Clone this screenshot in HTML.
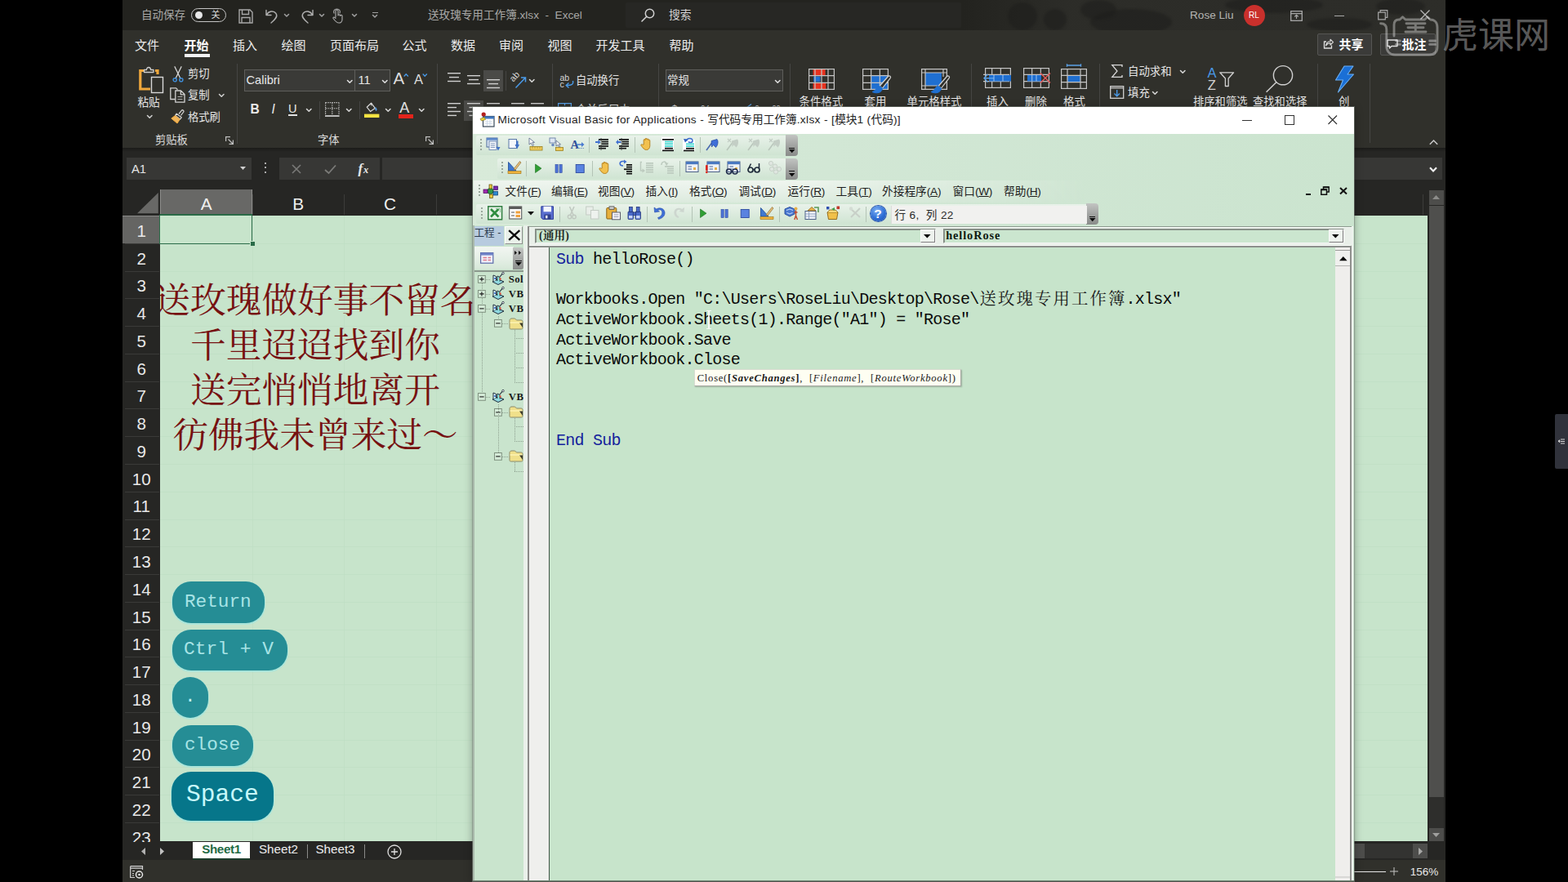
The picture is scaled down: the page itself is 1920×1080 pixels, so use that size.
<!DOCTYPE html>
<html lang="zh-CN"><head><meta charset="utf-8"><title>Excel - VBA</title><style>
html,body{margin:0;padding:0;background:#000;}
body{width:1920px;height:1080px;overflow:hidden;position:relative;font-family:"Liberation Sans","Noto Sans CJK SC",sans-serif;}
.b{position:absolute;box-sizing:border-box;}
.t{position:absolute;white-space:pre;line-height:1;}
svg.b{overflow:visible;}
</style></head><body>
<!-- frame -->
<div class="b" style="left:150.0px;top:0.0px;width:1620.0px;height:37.0px;background:#23231f;"></div>
<div class="b" style="left:150.0px;top:37.0px;width:1620.0px;height:144.0px;background:#30302b;"></div>
<div class="b" style="left:150.0px;top:181.0px;width:1620.0px;height:83.0px;background:#262624;"></div>
<div class="b" style="left:150.0px;top:181.0px;width:1620.0px;height:5.0px;background:linear-gradient(180deg,#1b1b19 0%,#262624 100%);"></div>
<div class="b" style="left:150.0px;top:264.0px;width:1620.0px;height:766.0px;background:#c7e4cb;"></div>
<div class="b" style="left:150.0px;top:1030.0px;width:1620.0px;height:22.0px;background:#262624;"></div>
<div class="b" style="left:150.0px;top:1052.7px;width:1620.0px;height:27.3px;background:#30302b;"></div>
<!-- titlebar -->
<div class="b" style="left:150.0px;top:0.0px;width:1620.0px;height:37.0px;overflow:hidden;"><div class="b" style="left:1030.0px;top:0.0px;width:590.0px;height:37.0px;background:linear-gradient(90deg,rgba(48,48,44,0) 0%,rgba(46,46,42,.85) 22%,rgba(46,46,42,.9) 100%);"></div><div class="b" style="left:1084.0px;top:3.0px;width:36.0px;height:34.0px;background:rgba(30,30,27,.55);border-radius:50%;filter:blur(1.5px);"></div><div class="b" style="left:1128.0px;top:11.0px;width:28.0px;height:26.0px;background:rgba(30,30,27,.55);border-radius:50%;filter:blur(1.5px);"></div><div class="b" style="left:1185.0px;top:11.0px;width:100.0px;height:32.0px;background:rgba(30,30,27,.55);border-radius:50%;filter:blur(1.5px);"></div><div class="b" style="left:1173.0px;top:0.0px;width:44.0px;height:24.0px;background:rgba(30,30,27,.55);border-radius:50%;filter:blur(1.5px);"></div><div class="b" style="left:1350.0px;top:-4.0px;width:120.0px;height:20.0px;background:rgba(30,30,27,.55);border-radius:50%;filter:blur(1.5px);"></div><div class="b" style="left:1450.0px;top:22.0px;width:80.0px;height:16.0px;background:rgba(30,30,27,.55);border-radius:50%;filter:blur(1.5px);"></div><div class="b" style="left:1535.0px;top:-2.0px;width:60.0px;height:20.0px;background:rgba(30,30,27,.55);border-radius:50%;filter:blur(1.5px);"></div></div>
<div class="b" style="left:766.0px;top:3.0px;width:411.0px;height:31.0px;background:#272724;border-radius:2px;"></div>
<span class="t" style="left:173.0px;top:12.0px;font-size:13.50px;color:#a8a8a6;">自动保存</span>
<div class="b" style="left:234.0px;top:9.5px;width:43.0px;height:17.5px;border:1.5px solid #c4c4c4;border-radius:9px;"></div>
<div class="b" style="left:238.5px;top:14.0px;width:9.0px;height:9.0px;background:#e8e8e8;border-radius:50%;"></div>
<span class="t" style="left:258.5px;top:13.0px;font-size:11.00px;color:#d8d8d8;">关</span>
<svg class="b" style="left:292.0px;top:11.0px;" width="18" height="18" viewBox="0 0 18 18"><path d="M1 1H14L17 4V17H1Z M4.5 1V6.5H12.5V1 M4 17V10.5H14V17" fill="none" stroke="#a8a8a8" stroke-width="1.4"/></svg>
<svg class="b" style="left:324.0px;top:10.0px;" width="18" height="18" viewBox="0 0 18 18"><path d="M2 2.5V8.5H8 M2.5 8C5 3.5 11 2.5 14 6.5C16.5 10.5 13 14 8 18" fill="none" stroke="#b0b0b0" stroke-width="1.4" stroke-linecap="round" stroke-linejoin="round"/></svg>
<svg class="b" style="left:348.0px;top:17.2px;" width="6" height="3.5" viewBox="0 0 6 3.5"><path d="M0.5 0.5 L3 3 L5.5 0.5" fill="none" stroke="#a0a0a0" stroke-width="1.5" stroke-linecap="round" stroke-linejoin="round"/></svg>
<svg class="b" style="left:367.0px;top:10.0px;" width="18" height="18" viewBox="0 0 18 18"><path d="M16 2.5V8.5H10 M15.5 8C13 3.5 7 2.5 4 6.5C1.5 10.5 5 14 10 18" fill="none" stroke="#b0b0b0" stroke-width="1.4" stroke-linecap="round" stroke-linejoin="round"/></svg>
<svg class="b" style="left:391.0px;top:17.2px;" width="6" height="3.5" viewBox="0 0 6 3.5"><path d="M0.5 0.5 L3 3 L5.5 0.5" fill="none" stroke="#a0a0a0" stroke-width="1.5" stroke-linecap="round" stroke-linejoin="round"/></svg>
<svg class="b" style="left:406.0px;top:10.0px;" width="15" height="19" viewBox="0 0 15 19"><path d="M5 11V3.5C5 1.5 8 1.5 8 3.5V9 M8 9C8 7.5 10.5 7.5 10.5 9 M10.5 9.5C10.5 8 13 8 13 9.5V14C13 16.5 11 18 9 18C6 18 4.5 16 2 12.5C1.5 11 3.5 10.5 5 12.5 M3 6C2 4 3 1 6.5 1C10 1 11 4 10 6" fill="none" stroke="#a8a8a8" stroke-width="1.2" stroke-linecap="round"/></svg>
<svg class="b" style="left:430.5px;top:17.2px;" width="6" height="3.5" viewBox="0 0 6 3.5"><path d="M0.5 0.5 L3 3 L5.5 0.5" fill="none" stroke="#a0a0a0" stroke-width="1.5" stroke-linecap="round" stroke-linejoin="round"/></svg>
<div class="b" style="left:455.5px;top:15.0px;width:7.0px;height:1.2px;background:#a0a0a0;"></div>
<svg class="b" style="left:456.0px;top:18.2px;" width="6" height="3.5" viewBox="0 0 6 3.5"><path d="M0.5 0.5 L3 3 L5.5 0.5" fill="none" stroke="#a0a0a0" stroke-width="1.5" stroke-linecap="round" stroke-linejoin="round"/></svg>
<span class="t" style="left:524.0px;top:11.8px;font-size:13.60px;color:#a8a8a6;">送玫瑰专用工作簿.xlsx  -  Excel</span>
<svg class="b" style="left:785.0px;top:10.0px;" width="17" height="17" viewBox="0 0 17 17"><circle cx="10.5" cy="6.5" r="5.2" fill="none" stroke="#d0d0d0" stroke-width="1.5"/><path d="M6.8 10.2L1 16" stroke="#d0d0d0" stroke-width="1.6" stroke-linecap="round"/></svg>
<span class="t" style="left:819.0px;top:12.2px;font-size:13.80px;color:#d4d4d4;">搜索</span>
<span class="t" style="left:1457.0px;top:11.7px;font-size:13.60px;color:#b4b4b2;">Rose Liu</span>
<div class="b" style="left:1522.5px;top:6.0px;width:26.0px;height:26.0px;background:#c9302c;border-radius:50%;"></div>
<span class="t" style="left:1535.5px;top:14.4px;font-size:10.00px;color:#fff;transform:translateX(-50%);">RL</span>
<svg class="b" style="left:1580.0px;top:12.5px;" width="15" height="13" viewBox="0 0 15 13"><rect x=".7" y=".7" width="13.6" height="11.6" fill="none" stroke="#a8a8a8" stroke-width="1.3"/><path d="M.7 3.6H14.3 M7.5 10V5.5 M5.3 7.5L7.5 5.3L9.7 7.5" fill="none" stroke="#a8a8a8" stroke-width="1.2"/></svg>
<div class="b" style="left:1634.0px;top:18.5px;width:12.0px;height:1.3px;background:#a8a8a8;"></div>
<svg class="b" style="left:1686.5px;top:12.0px;" width="12.5" height="12.5" viewBox="0 0 12.5 12.5"><path d="M.7 3.2H9.3V11.8H.7Z M3.2 3V.7H11.8V9.3H9.5" fill="none" stroke="#a8a8a8" stroke-width="1.2"/></svg>
<svg class="b" style="left:1738.5px;top:12.0px;" width="12" height="12" viewBox="0 0 12 12"><path d="M.5 .5L11.5 11.5 M11.5 .5L.5 11.5" stroke="#b8b8b8" stroke-width="1.3"/></svg>
<!-- tabs -->
<span class="t" style="left:165.0px;top:47.5px;font-size:15.00px;color:#ececec;">文件</span>
<span class="t" style="left:285.0px;top:47.5px;font-size:15.00px;color:#ececec;">插入</span>
<span class="t" style="left:344.5px;top:47.5px;font-size:15.00px;color:#ececec;">绘图</span>
<span class="t" style="left:404.0px;top:47.5px;font-size:15.00px;color:#ececec;">页面布局</span>
<span class="t" style="left:492.5px;top:47.5px;font-size:15.00px;color:#ececec;">公式</span>
<span class="t" style="left:552.0px;top:47.5px;font-size:15.00px;color:#ececec;">数据</span>
<span class="t" style="left:611.0px;top:47.5px;font-size:15.00px;color:#ececec;">审阅</span>
<span class="t" style="left:670.5px;top:47.5px;font-size:15.00px;color:#ececec;">视图</span>
<span class="t" style="left:729.5px;top:47.5px;font-size:15.00px;color:#ececec;">开发工具</span>
<span class="t" style="left:819.5px;top:47.5px;font-size:15.00px;color:#ececec;">帮助</span>
<span class="t" style="left:225.5px;top:47.5px;font-size:15.00px;color:#ffffff;font-weight:700;">开始</span>
<div class="b" style="left:226.0px;top:66.0px;width:30.5px;height:3.6px;background:#f2f2f2;"></div>
<div class="b" style="left:1612.5px;top:40.5px;width:67.5px;height:27.0px;background:#3b3b39;border:1px solid #555553;border-radius:2px;"></div>
<svg class="b" style="left:1620.0px;top:47.0px;" width="13" height="13" viewBox="0 0 13 13"><path d="M4 4H1.5V12H10.5V8.5" fill="none" stroke="#e0e0e0" stroke-width="1.3"/><path d="M3.5 9C4 5.5 6 3.8 9 3.8V1.2L12.5 4.6L9 8V5.8C6.5 5.8 5 6.6 3.5 9Z" fill="none" stroke="#e0e0e0" stroke-width="1.1" stroke-linejoin="round"/></svg>
<span class="t" style="left:1639.5px;top:47.1px;font-size:15.00px;color:#ffffff;font-weight:700;">共享</span>
<div class="b" style="left:1689.5px;top:40.5px;width:68.0px;height:27.0px;background:#3b3b39;border:1px solid #555553;border-radius:2px;"></div>
<svg class="b" style="left:1698.0px;top:47.5px;" width="14" height="12" viewBox="0 0 14 12"><path d="M1 1H13V8.5H6L3.5 11V8.5H1Z" fill="none" stroke="#e0e0e0" stroke-width="1.3" stroke-linejoin="round"/></svg>
<span class="t" style="left:1716.5px;top:47.1px;font-size:15.00px;color:#ffffff;font-weight:700;">批注</span>
<!-- ribbon -->
<svg class="b" style="left:169.0px;top:80.5px;" width="32" height="34" viewBox="0 0 32 34"><path d="M8 5.5H2.8V28H15" fill="none" stroke="#f0a83c" stroke-width="3.2"/><path d="M21 5.5H24V10" fill="none" stroke="#f0a83c" stroke-width="3.2"/><path d="M7.5 7.5V4.5H10.5C10.5 0.5 15.5 0.5 15.5 4.5H19V7.5Z" fill="none" stroke="#d0d0d0" stroke-width="1.3" stroke-linejoin="round"/><rect x="16.5" y="13.5" width="14" height="19" fill="#30302b" stroke="#d8d8d8" stroke-width="1.4"/></svg>
<span class="t" style="left:168.5px;top:119.3px;font-size:13.60px;color:#e4e4e4;">粘贴</span>
<svg class="b" style="left:179.8px;top:140.6px;" width="6.5" height="3.8" viewBox="0 0 6.5 3.8"><path d="M0.5 0.5 L3.25 3.3 L6 0.5" fill="none" stroke="#d0d0d0" stroke-width="1.5" stroke-linecap="round" stroke-linejoin="round"/></svg>
<svg class="b" style="left:211.0px;top:80.5px;" width="14" height="20" viewBox="0 0 14 20"><path d="M3 .8L9.8 14.8 M11 .8L4.2 14.8" stroke="#d8d8d8" stroke-width="1.3" stroke-linecap="round"/><circle cx="3.2" cy="16.8" r="2.1" fill="none" stroke="#3f8fdc" stroke-width="1.4"/><circle cx="10.8" cy="16.8" r="2.1" fill="none" stroke="#3f8fdc" stroke-width="1.4"/></svg>
<span class="t" style="left:230.0px;top:83.6px;font-size:13.30px;color:#e4e4e4;">剪切</span>
<svg class="b" style="left:208.0px;top:107.0px;" width="19" height="19" viewBox="0 0 19 19"><path d="M6.5 14.5H.8V.8H7.5L9.5 2.8" fill="none" stroke="#d0d0d0" stroke-width="1.3"/><path d="M6.8 4H13.5L18 8.5V18.2H6.8Z M13.3 4V8.8H18" fill="none" stroke="#d0d0d0" stroke-width="1.3" stroke-linejoin="round"/><path d="M9.5 11.5H15.5 M9.5 14.5H15.5" stroke="#b0b0b0" stroke-width="1"/></svg>
<span class="t" style="left:230.0px;top:110.2px;font-size:13.30px;color:#e4e4e4;">复制</span>
<svg class="b" style="left:267.8px;top:115.3px;" width="6.5" height="3.8" viewBox="0 0 6.5 3.8"><path d="M0.5 0.5 L3.25 3.3 L6 0.5" fill="none" stroke="#d0d0d0" stroke-width="1.5" stroke-linecap="round" stroke-linejoin="round"/></svg>
<svg class="b" style="left:208.5px;top:133.5px;" width="19" height="18" viewBox="0 0 19 18"><path d="M10 5.5L13.5 1.2C14.5 0 16.8 1.8 15.8 3L12.5 7.3" fill="none" stroke="#d8d8d8" stroke-width="1.2"/><path d="M7.2 5.2L13.2 9.8L11.6 12L5.6 7.4Z" fill="none" stroke="#d8d8d8" stroke-width="1.2" stroke-linejoin="round"/><path d="M5.4 7.6L11.2 12.2L8 17L.8 11Z" fill="#f0b45a" stroke="#f0a83c" stroke-width="1" stroke-linejoin="round"/></svg>
<span class="t" style="left:230.0px;top:136.9px;font-size:13.30px;color:#e4e4e4;">格式刷</span>
<span class="t" style="left:190.0px;top:164.6px;font-size:13.30px;color:#dcdcdc;">剪贴板</span>
<svg class="b" style="left:276.0px;top:166.5px;" width="10" height="10" viewBox="0 0 10 10"><path d="M.6 6V.6H6 M3.5 3.5L9 9 M9.4 4.5V9.4H4.5" fill="none" stroke="#c0c0c0" stroke-width="1.2"/></svg>
<div class="b" style="left:290.0px;top:78.0px;width:1.0px;height:98.0px;background:#454543;"></div>
<div class="b" style="left:298.5px;top:85.0px;width:136.5px;height:26.8px;background:#3a3a37;border:1px solid #5e5e5b;"></div>
<div class="b" style="left:435.0px;top:85.0px;width:43.0px;height:26.8px;background:#3a3a37;border:1px solid #5e5e5b;border-left:none;"></div>
<span class="t" style="left:301.5px;top:91.2px;font-size:14.60px;color:#e8e8e8;">Calibri</span>
<svg class="b" style="left:424.8px;top:97.6px;" width="6.5" height="3.8" viewBox="0 0 6.5 3.8"><path d="M0.5 0.5 L3.25 3.3 L6 0.5" fill="none" stroke="#e0e0e0" stroke-width="1.5" stroke-linecap="round" stroke-linejoin="round"/></svg>
<span class="t" style="left:438.5px;top:91.2px;font-size:14.60px;color:#e8e8e8;">11</span>
<svg class="b" style="left:467.8px;top:97.6px;" width="6.5" height="3.8" viewBox="0 0 6.5 3.8"><path d="M0.5 0.5 L3.25 3.3 L6 0.5" fill="none" stroke="#e0e0e0" stroke-width="1.5" stroke-linecap="round" stroke-linejoin="round"/></svg>
<span class="t" style="left:481.5px;top:85.8px;font-size:20.50px;color:#dcdcdc;">A</span>
<svg class="b" style="left:493.5px;top:89.5px;" width="6.5" height="4" viewBox="0 0 6.5 4"><path d="M.7 3.5L3.2 .8L5.8 3.5" fill="none" stroke="#4a9ae8" stroke-width="1.3"/></svg>
<span class="t" style="left:507.0px;top:89.2px;font-size:16.50px;color:#dcdcdc;">A</span>
<svg class="b" style="left:516.5px;top:89.5px;" width="6.5" height="4" viewBox="0 0 6.5 4"><path d="M.7 .5L3.2 3.2L5.8 .5" fill="none" stroke="#4a9ae8" stroke-width="1.3"/></svg>
<span class="t" style="left:306.5px;top:125.7px;font-size:15.60px;color:#e8e8e8;font-weight:700;">B</span>
<span class="t" style="left:332.5px;top:125.7px;font-size:15.60px;color:#e8e8e8;font-style:italic;">I</span>
<span class="t" style="left:353.0px;top:125.6px;font-size:14.60px;color:#e8e8e8;">U</span>
<div class="b" style="left:353.0px;top:140.4px;width:10.6px;height:1.2px;background:#e0e0e0;"></div>
<svg class="b" style="left:375.2px;top:133.1px;" width="6.5" height="3.8" viewBox="0 0 6.5 3.8"><path d="M0.5 0.5 L3.25 3.3 L6 0.5" fill="none" stroke="#d8d8d8" stroke-width="1.5" stroke-linecap="round" stroke-linejoin="round"/></svg>
<div class="b" style="left:390.5px;top:124.0px;width:1.0px;height:22.0px;background:#454543;"></div>
<svg class="b" style="left:398.0px;top:125.0px;" width="18" height="18" viewBox="0 0 18 18"><path d="M.6 .6H17 M.6 .6V15 M17 .6V15 M8.8 .6V15 M.6 7.8H17" stroke="#c8c8c8" stroke-width="1.1" stroke-dasharray="1.4 1.2" fill="none"/><path d="M0 17H17.6" stroke="#e0e0e0" stroke-width="1.6"/></svg>
<svg class="b" style="left:423.8px;top:133.1px;" width="6.5" height="3.8" viewBox="0 0 6.5 3.8"><path d="M0.5 0.5 L3.25 3.3 L6 0.5" fill="none" stroke="#d8d8d8" stroke-width="1.5" stroke-linecap="round" stroke-linejoin="round"/></svg>
<div class="b" style="left:439.5px;top:124.0px;width:1.0px;height:22.0px;background:#454543;"></div>
<svg class="b" style="left:446.0px;top:124.5px;" width="19" height="20" viewBox="0 0 19 20"><path d="M8.5 1.2L13.2 7.4L7.6 11.6L3.2 6.2Z" fill="none" stroke="#d8d8d8" stroke-width="1.2" stroke-linejoin="round"/><path d="M8.8 1V4.5" stroke="#d8d8d8" stroke-width="1.1"/><path d="M13.8 6.5C15.2 8 15.6 9.5 14.6 10.6C13.8 9.6 13.4 8.4 13.8 6.5Z" fill="#5aa0e6" stroke="#5aa0e6" stroke-width=".8"/><rect x="0" y="14.6" width="18.4" height="4.4" fill="#f5e342"/></svg>
<svg class="b" style="left:471.8px;top:133.1px;" width="6.5" height="3.8" viewBox="0 0 6.5 3.8"><path d="M0.5 0.5 L3.25 3.3 L6 0.5" fill="none" stroke="#d8d8d8" stroke-width="1.5" stroke-linecap="round" stroke-linejoin="round"/></svg>
<span class="t" style="left:489.3px;top:123.2px;font-size:18.00px;color:#e0e0e0;">A</span>
<div class="b" style="left:488.0px;top:140.3px;width:17.6px;height:4.6px;background:#e3241b;"></div>
<svg class="b" style="left:512.8px;top:133.1px;" width="6.5" height="3.8" viewBox="0 0 6.5 3.8"><path d="M0.5 0.5 L3.25 3.3 L6 0.5" fill="none" stroke="#d8d8d8" stroke-width="1.5" stroke-linecap="round" stroke-linejoin="round"/></svg>
<span class="t" style="left:389.0px;top:164.6px;font-size:13.30px;color:#dcdcdc;">字体</span>
<svg class="b" style="left:520.5px;top:166.5px;" width="10" height="10" viewBox="0 0 10 10"><path d="M.6 6V.6H6 M3.5 3.5L9 9 M9.4 4.5V9.4H4.5" fill="none" stroke="#c0c0c0" stroke-width="1.2"/></svg>
<div class="b" style="left:534.5px;top:78.0px;width:1.0px;height:98.0px;background:#454543;"></div>
<svg class="b" style="left:547.5px;top:89.0px;" width="16" height="14.7" viewBox="0 0 16 14.7"><rect x="0" y="0" width="16" height="1.4" fill="#d0d0d0"/><rect x="2" y="4.9" width="12" height="1.4" fill="#d0d0d0"/><rect x="0" y="9.8" width="16" height="1.4" fill="#d0d0d0"/></svg>
<svg class="b" style="left:572.0px;top:92.3px;" width="16" height="14.7" viewBox="0 0 16 14.7"><rect x="0" y="0" width="16" height="1.4" fill="#d0d0d0"/><rect x="2" y="4.9" width="12" height="1.4" fill="#d0d0d0"/><rect x="0" y="9.8" width="16" height="1.4" fill="#d0d0d0"/></svg>
<div class="b" style="left:592.0px;top:86.0px;width:23.5px;height:25.8px;background:#4a4a47;"></div>
<svg class="b" style="left:595.8px;top:97.0px;" width="16" height="14.7" viewBox="0 0 16 14.7"><rect x="0" y="0" width="16" height="1.4" fill="#d0d0d0"/><rect x="2" y="4.9" width="12" height="1.4" fill="#d0d0d0"/><rect x="0" y="9.8" width="16" height="1.4" fill="#d0d0d0"/></svg>
<div class="b" style="left:618.5px;top:87.0px;width:1.0px;height:24.0px;background:#454543;"></div>
<svg class="b" style="left:625.0px;top:87.5px;" width="20" height="21" viewBox="0 0 20 21"><path d="M6.5 19.5L18 7.5 M13 7H18.5V12.5" fill="none" stroke="#4a9ae8" stroke-width="1.5"/></svg>
<span class="t" style="left:629.5px;top:91.2px;font-size:11.00px;color:#d8d8d8;transform:rotate(-47deg);transform-origin:0 100%;">ab</span>
<svg class="b" style="left:647.8px;top:97.3px;" width="6.5" height="3.8" viewBox="0 0 6.5 3.8"><path d="M0.5 0.5 L3.25 3.3 L6 0.5" fill="none" stroke="#d8d8d8" stroke-width="1.5" stroke-linecap="round" stroke-linejoin="round"/></svg>
<div class="b" style="left:675.5px;top:78.0px;width:1.0px;height:98.0px;background:#454543;"></div>
<span class="t" style="left:685.5px;top:89.6px;font-size:10.50px;color:#d8d8d8;">ab</span>
<span class="t" style="left:685.5px;top:97.9px;font-size:10.50px;color:#d8d8d8;">c</span>
<svg class="b" style="left:691.5px;top:98.5px;" width="10.5" height="9" viewBox="0 0 10.5 9"><path d="M9.5 0C10.5 4.5 8 5.5 1.5 5.5 M4.5 2.5L1.2 5.5L4.5 8.5" fill="none" stroke="#4a9ae8" stroke-width="1.4"/></svg>
<span class="t" style="left:705.0px;top:92.3px;font-size:13.30px;color:#e4e4e4;">自动换行</span>
<svg class="b" style="left:547.5px;top:126.0px;" width="16" height="19.6" viewBox="0 0 16 19.6"><rect x="0" y="0" width="16" height="1.4" fill="#d0d0d0"/><rect x="0" y="4.9" width="11" height="1.4" fill="#d0d0d0"/><rect x="0" y="9.8" width="16" height="1.4" fill="#d0d0d0"/><rect x="0" y="14.7" width="11" height="1.4" fill="#d0d0d0"/></svg>
<div class="b" style="left:568.0px;top:122.5px;width:24.0px;height:25.0px;background:#4a4a47;"></div>
<svg class="b" style="left:572.0px;top:126.0px;" width="16" height="19.6" viewBox="0 0 16 19.6"><rect x="0" y="0" width="16" height="1.4" fill="#d0d0d0"/><rect x="2.5" y="4.9" width="11" height="1.4" fill="#d0d0d0"/><rect x="0" y="9.8" width="16" height="1.4" fill="#d0d0d0"/><rect x="2.5" y="14.7" width="11" height="1.4" fill="#d0d0d0"/></svg>
<svg class="b" style="left:595.8px;top:126.0px;" width="16" height="4.9" viewBox="0 0 16 4.9"><rect x="0" y="0" width="16" height="1.4" fill="#d0d0d0"/></svg>
<svg class="b" style="left:626.0px;top:126.0px;" width="16" height="4.9" viewBox="0 0 16 4.9"><rect x="0" y="0" width="16" height="1.4" fill="#d0d0d0"/></svg>
<svg class="b" style="left:650.0px;top:126.0px;" width="16" height="4.9" viewBox="0 0 16 4.9"><rect x="0" y="0" width="16" height="1.4" fill="#d0d0d0"/></svg>
<svg class="b" style="left:683.0px;top:125.5px;" width="17" height="6" viewBox="0 0 17 6"><path d="M.6 6V.6H16.4V6 M8.5 .6V3.2" fill="none" stroke="#5aa0e6" stroke-width="1.2"/></svg>
<span class="t" style="left:705.0px;top:127.6px;font-size:13.30px;color:#e4e4e4;">合并后居中</span>
<div class="b" style="left:805.5px;top:78.0px;width:1.0px;height:98.0px;background:#454543;"></div>
<div class="b" style="left:814.5px;top:85.0px;width:144.0px;height:26.8px;background:#3a3a37;border:1px solid #5e5e5b;"></div>
<span class="t" style="left:817.0px;top:92.3px;font-size:13.40px;color:#e4e4e4;">常规</span>
<svg class="b" style="left:948.8px;top:97.6px;" width="6.5" height="3.8" viewBox="0 0 6.5 3.8"><path d="M0.5 0.5 L3.25 3.3 L6 0.5" fill="none" stroke="#e0e0e0" stroke-width="1.5" stroke-linecap="round" stroke-linejoin="round"/></svg>
<span class="t" style="left:822.0px;top:127.3px;font-size:14.00px;color:#d0d0d0;">$</span>
<span class="t" style="left:858.0px;top:127.3px;font-size:14.00px;color:#d0d0d0;">%</span>
<span class="t" style="left:890.0px;top:120.4px;font-size:20.00px;color:#d0d0d0;font-weight:700;">,</span>
<span class="t" style="left:922.0px;top:127.7px;font-size:9.00px;color:#d0d0d0;">.0</span>
<span class="t" style="left:943.0px;top:127.7px;font-size:9.00px;color:#d0d0d0;">.00</span>
<svg class="b" style="left:913.0px;top:127.0px;" width="8" height="6" viewBox="0 0 8 6"><path d="M7 .5L1 5" stroke="#5aa0e6" stroke-width="1.2"/></svg>
<div class="b" style="left:967.0px;top:78.0px;width:1.0px;height:98.0px;background:#454543;"></div>
<svg class="b" style="left:990.0px;top:83.5px;" width="32" height="26" viewBox="0 0 32 26"><rect x="5.6" y="1" width="15" height="7.6" fill="#e8321e"/><rect x="5.6" y="17.6" width="15.8" height="7.6" fill="#e8321e"/><rect x="6.2" y="9.6" width="8.2" height="6.6" fill="#1f6fd0"/><rect x="0.6" y="0.6" width="30.8" height="24.8" fill="none" stroke="#c4c4c4" stroke-width="1.2"/><path d="M8 0V26M16 0V26M24 0V26M0 8.66667H32M0 17.3333H32" stroke="#c4c4c4" stroke-width="1.2" fill="none"/></svg>
<span class="t" style="left:978.5px;top:117.8px;font-size:13.40px;color:#e4e4e4;">条件格式</span>
<svg class="b" style="left:1056.0px;top:83.5px;" width="36" height="32" viewBox="0 0 36 32"><rect x="11" y="9" width="21" height="17" fill="#1f6fd0"/><rect x="0.6" y="0.6" width="30.8" height="24.8" fill="none" stroke="#c4c4c4" stroke-width="1.2"/><path d="M10.6667 0V26M21.3333 0V26M0 8.66667H32M0 17.3333H32" stroke="#c4c4c4" stroke-width="1.2" fill="none"/><path d="M21 21.5L31.5 9.5C33 8 35.5 9.8 34.2 11.6L24.5 24Z" fill="#30302b" stroke="#d4d4d4" stroke-width="1.2" stroke-linejoin="round"/><path d="M21 21.5C17 21.5 17.5 26.5 12 28.5C17 31 24 30 24.5 24Z" fill="#1f6fd0" stroke="#1f6fd0" stroke-width="1"/></svg>
<span class="t" style="left:1058.5px;top:117.8px;font-size:13.40px;color:#e4e4e4;">套用</span>
<svg class="b" style="left:1128.0px;top:83.5px;" width="36" height="32" viewBox="0 0 36 32"><rect x="5" y="5" width="20" height="16" fill="#1f6fd0"/><path d="M.6 .6H31.4V25.4H.6Z M5 .6V25.4 M27 .6V10 M.6 5H31.4 M.6 21H20" fill="none" stroke="#c4c4c4" stroke-width="1.2"/><path d="M21 21.5L31.5 9.5C33 8 35.5 9.8 34.2 11.6L24.5 24Z" fill="#30302b" stroke="#d4d4d4" stroke-width="1.2" stroke-linejoin="round"/><path d="M21 21.5C17 21.5 17.5 26.5 12 28.5C17 31 24 30 24.5 24Z" fill="#1f6fd0" stroke="#1f6fd0" stroke-width="1"/></svg>
<span class="t" style="left:1110.5px;top:117.8px;font-size:13.40px;color:#e4e4e4;">单元格样式</span>
<div class="b" style="left:1189.0px;top:78.0px;width:1.0px;height:98.0px;background:#454543;"></div>
<svg class="b" style="left:1204.0px;top:83.0px;transform:translateX(0px);" width="34" height="26" viewBox="0 0 34 26"><rect x="2.6" y="0.6" width="30.8" height="23.8" fill="none" stroke="#c4c4c4" stroke-width="1.2"/><path d="M10.6667 0V25M21.3333 0V25M0 8.33333H32M0 16.6667H32" stroke="#c4c4c4" stroke-width="1.2" fill="none"/><rect x="7" y="9" width="27" height="7.5" fill="#1f6fd0"/><path d="M13 12.7H1 M5.5 8L1 12.7L5.5 17.5" fill="none" stroke="#5aa0e6" stroke-width="1.4"/><path d="M13 9V16.5 M24 9V16.5" stroke="#9cc4f0" stroke-width="1"/></svg>
<span class="t" style="left:1208.0px;top:117.8px;font-size:13.40px;color:#e4e4e4;">插入</span>
<svg class="b" style="left:1252.5px;top:83.0px;" width="34" height="26" viewBox="0 0 34 26"><rect x="0.6" y="0.6" width="30.8" height="23.8" fill="none" stroke="#c4c4c4" stroke-width="1.2"/><path d="M10.6667 0V25M21.3333 0V25M0 8.33333H32M0 16.6667H32" stroke="#c4c4c4" stroke-width="1.2" fill="none"/><rect x="5" y="9" width="17" height="7.5" fill="#1f6fd0"/><path d="M10.7 9V16.5 M16 9V16.5" stroke="#9cc4f0" stroke-width="1"/><path d="M21 6.5L33 18.5 M33 6.5L21 18.5" stroke="#e25a5a" stroke-width="1.5"/></svg>
<span class="t" style="left:1255.0px;top:117.8px;font-size:13.40px;color:#e4e4e4;">删除</span>
<svg class="b" style="left:1299.0px;top:77.5px;" width="32" height="32" viewBox="0 0 32 32"><path d="M7.5 .3V3.7 M24.5 .3V3.7 M7.5 2H24.5" stroke="#5aa0e6" stroke-width="1.3" fill="none"/><g transform="translate(0 6)"><rect x="8" y="8.3" width="16" height="8.4" fill="#1f6fd0"/><rect x="0.6" y="0.6" width="30.8" height="23.8" fill="none" stroke="#c4c4c4" stroke-width="1.2"/><path d="M0 8.33333H32M0 16.6667H32" stroke="#c4c4c4" stroke-width="1.2" fill="none"/><path d="M8 0V25 M24 0V25" stroke="#c4c4c4" stroke-width="1.2"/></g></svg>
<span class="t" style="left:1302.0px;top:117.8px;font-size:13.40px;color:#e4e4e4;">格式</span>
<div class="b" style="left:1346.0px;top:78.0px;width:1.0px;height:98.0px;background:#454543;"></div>
<svg class="b" style="left:1361.0px;top:79.0px;" width="14" height="16" viewBox="0 0 14 16"><path d="M13 3V.7H.8L7 8L.8 15.3H13V13" fill="none" stroke="#d8d8d8" stroke-width="1.3" stroke-linejoin="miter"/></svg>
<span class="t" style="left:1381.0px;top:81.1px;font-size:13.40px;color:#e4e4e4;">自动求和</span>
<svg class="b" style="left:1445.2px;top:86.3px;" width="6.5" height="3.8" viewBox="0 0 6.5 3.8"><path d="M0.5 0.5 L3.25 3.3 L6 0.5" fill="none" stroke="#d8d8d8" stroke-width="1.5" stroke-linecap="round" stroke-linejoin="round"/></svg>
<svg class="b" style="left:1359.0px;top:104.5px;" width="17.5" height="16" viewBox="0 0 17.5 16"><rect x=".7" y=".7" width="16" height="14.6" fill="none" stroke="#d0d0d0" stroke-width="1.3"/><path d="M.7 2.8H16.7" stroke="#d0d0d0" stroke-width="1.2"/><path d="M8.7 5V12.5 M5.5 9.5L8.7 12.7L11.9 9.5" fill="none" stroke="#4a9ae8" stroke-width="1.4"/></svg>
<span class="t" style="left:1381.0px;top:106.8px;font-size:13.40px;color:#e4e4e4;">填充</span>
<svg class="b" style="left:1411.2px;top:111.9px;" width="6.5" height="3.8" viewBox="0 0 6.5 3.8"><path d="M0.5 0.5 L3.25 3.3 L6 0.5" fill="none" stroke="#d8d8d8" stroke-width="1.5" stroke-linecap="round" stroke-linejoin="round"/></svg>
<span class="t" style="left:1478.5px;top:80.6px;font-size:16.50px;color:#4a9ae8;">A</span>
<span class="t" style="left:1478.8px;top:96.0px;font-size:16.50px;color:#d0d0d0;">Z</span>
<svg class="b" style="left:1492.5px;top:88.0px;" width="19" height="18.5" viewBox="0 0 19 18.5"><path d="M.8 .8H17.6L11.2 8V17.5H7.4V8Z" fill="none" stroke="#d0d0d0" stroke-width="1.3" stroke-linejoin="round"/></svg>
<span class="t" style="left:1461.0px;top:117.9px;font-size:13.30px;color:#e4e4e4;">排序和筛选</span>
<svg class="b" style="left:1549.0px;top:79.0px;" width="36" height="36" viewBox="0 0 36 36"><circle cx="22" cy="13.2" r="11.6" fill="none" stroke="#d0d0d0" stroke-width="1.4"/><path d="M13.8 21.8L1.6 33.8" stroke="#d0d0d0" stroke-width="1.5"/></svg>
<span class="t" style="left:1534.0px;top:117.9px;font-size:13.30px;color:#e4e4e4;">查找和选择</span>
<div class="b" style="left:1613.0px;top:78.0px;width:1.0px;height:98.0px;background:#454543;"></div>
<svg class="b" style="left:1633.0px;top:79.5px;" width="26" height="34" viewBox="0 0 26 34"><path d="M13 1H24L17 11H24.5L5.5 33L11.5 18H2.5Z" fill="#1a6fd6" stroke="#6ab0f5" stroke-width="1.1" stroke-linejoin="round"/></svg>
<span class="t" style="left:1639.0px;top:117.8px;font-size:13.40px;color:#e4e4e4;">创</span>
<div class="b" style="left:1677.0px;top:78.0px;width:1.0px;height:97.0px;background:#454543;"></div>
<svg class="b" style="left:1749.5px;top:171.0px;" width="11" height="6.5" viewBox="0 0 11 6.5"><path d="M.8 5.8L5.5 1L10.2 5.8" fill="none" stroke="#c8c8c8" stroke-width="1.5"/></svg>
<!-- formulabar -->
<div class="b" style="left:155.0px;top:192.5px;width:152.5px;height:27.5px;background:#373735;"></div>
<span class="t" style="left:161.0px;top:200.2px;font-size:14.80px;color:#e4e4e4;">A1</span>
<svg class="b" style="left:294.0px;top:204.0px;" width="7" height="4" viewBox="0 0 7 4"><path d="M0 0H7L3.5 4Z" fill="#d0d0d0"/></svg>
<div class="b" style="left:323.5px;top:198.5px;width:2.4px;height:2.4px;background:#d8d8d8;border-radius:50%;"></div>
<div class="b" style="left:323.5px;top:204.0px;width:2.4px;height:2.4px;background:#d8d8d8;border-radius:50%;"></div>
<div class="b" style="left:323.5px;top:209.5px;width:2.4px;height:2.4px;background:#d8d8d8;border-radius:50%;"></div>
<div class="b" style="left:342.0px;top:192.5px;width:122.5px;height:27.5px;background:#373735;"></div>
<svg class="b" style="left:356.5px;top:200.5px;" width="12" height="12" viewBox="0 0 12 12"><path d="M1 1L11 11 M11 1L1 11" stroke="#7a7a78" stroke-width="1.6"/></svg>
<svg class="b" style="left:396.5px;top:200.5px;" width="15" height="12" viewBox="0 0 15 12"><path d="M1 7L5.5 11L14 1.5" fill="none" stroke="#7a7a78" stroke-width="1.8"/></svg>
<span class="t" style="left:438.5px;top:197.8px;font-size:17.00px;color:#e8e8e8;font-family:'Liberation Serif',serif;font-weight:700;font-style:italic;">f</span>
<span class="t" style="left:445.0px;top:202.0px;font-size:12.50px;color:#e8e8e8;font-family:'Liberation Serif',serif;font-weight:700;font-style:italic;">x</span>
<div class="b" style="left:468.0px;top:192.5px;width:1297.5px;height:27.5px;background:#373735;"></div>
<svg class="b" style="left:1750.0px;top:203.5px;" width="10" height="7" viewBox="0 0 10 7"><path d="M1 1.2L5 5.4L9 1.2" fill="none" stroke="#f0f0f0" stroke-width="2.2"/></svg>
<!-- grid -->
<div class="b" style="left:150.0px;top:232.0px;width:1620.0px;height:32.0px;background:#262624;"></div>
<svg class="b" style="left:167.8px;top:235.8px;" width="25.8" height="25.2" viewBox="0 0 25.8 25.2"><path d="M25.8 0V25.2H0Z" fill="#686866"/></svg>
<div class="b" style="left:195.5px;top:231.6px;width:113.4px;height:31.9px;background:#686866;border-left:1px solid #8c8c8a;border-right:1px solid #8c8c8a;"></div>
<div class="b" style="left:196.0px;top:262.4px;width:112.5px;height:1.6px;background:#2a6a45;"></div>
<span class="t" style="left:252.6px;top:239.6px;font-size:20.80px;color:#f0f0f0;transform:translateX(-50%);">A</span>
<span class="t" style="left:365.1px;top:239.6px;font-size:20.80px;color:#f0f0f0;transform:translateX(-50%);">B</span>
<span class="t" style="left:477.6px;top:239.6px;font-size:20.80px;color:#f0f0f0;transform:translateX(-50%);">C</span>
<div class="b" style="left:308.5px;top:238.0px;width:1.0px;height:25.0px;background:#3c3c3a;"></div>
<div class="b" style="left:421.0px;top:238.0px;width:1.0px;height:25.0px;background:#3c3c3a;"></div>
<div class="b" style="left:533.5px;top:238.0px;width:1.0px;height:25.0px;background:#3c3c3a;"></div>
<div class="b" style="left:646.0px;top:238.0px;width:1.0px;height:25.0px;background:#3c3c3a;"></div>
<div class="b" style="left:758.5px;top:238.0px;width:1.0px;height:25.0px;background:#3c3c3a;"></div>
<div class="b" style="left:871.0px;top:238.0px;width:1.0px;height:25.0px;background:#3c3c3a;"></div>
<div class="b" style="left:983.5px;top:238.0px;width:1.0px;height:25.0px;background:#3c3c3a;"></div>
<div class="b" style="left:1096.0px;top:238.0px;width:1.0px;height:25.0px;background:#3c3c3a;"></div>
<div class="b" style="left:1208.5px;top:238.0px;width:1.0px;height:25.0px;background:#3c3c3a;"></div>
<div class="b" style="left:1321.0px;top:238.0px;width:1.0px;height:25.0px;background:#3c3c3a;"></div>
<div class="b" style="left:1433.5px;top:238.0px;width:1.0px;height:25.0px;background:#3c3c3a;"></div>
<div class="b" style="left:1546.0px;top:238.0px;width:1.0px;height:25.0px;background:#3c3c3a;"></div>
<div class="b" style="left:1741.5px;top:238.0px;width:1.0px;height:25.0px;background:#3c3c3a;"></div>
<div class="b" style="left:150.0px;top:264.0px;width:45.5px;height:766.0px;background:#262624;"></div>
<div class="b" style="left:150.0px;top:264.4px;width:45.5px;height:33.6px;background:#656563;border-top:1px solid #8a8a88;"></div>
<span class="t" style="left:173.3px;top:272.7px;font-size:20.60px;color:#e8e8e8;transform:translateX(-50%);">1</span>
<span class="t" style="left:173.3px;top:306.5px;font-size:20.60px;color:#e8e8e8;transform:translateX(-50%);">2</span>
<div class="b" style="left:153.0px;top:297.8px;width:42.0px;height:1.0px;background:#3a3a38;"></div>
<span class="t" style="left:173.3px;top:340.2px;font-size:20.60px;color:#e8e8e8;transform:translateX(-50%);">3</span>
<div class="b" style="left:153.0px;top:331.5px;width:42.0px;height:1.0px;background:#3a3a38;"></div>
<span class="t" style="left:173.3px;top:374.0px;font-size:20.60px;color:#e8e8e8;transform:translateX(-50%);">4</span>
<div class="b" style="left:153.0px;top:365.3px;width:42.0px;height:1.0px;background:#3a3a38;"></div>
<span class="t" style="left:173.3px;top:407.8px;font-size:20.60px;color:#e8e8e8;transform:translateX(-50%);">5</span>
<div class="b" style="left:153.0px;top:399.1px;width:42.0px;height:1.0px;background:#3a3a38;"></div>
<span class="t" style="left:173.3px;top:441.5px;font-size:20.60px;color:#e8e8e8;transform:translateX(-50%);">6</span>
<div class="b" style="left:153.0px;top:432.9px;width:42.0px;height:1.0px;background:#3a3a38;"></div>
<span class="t" style="left:173.3px;top:475.3px;font-size:20.60px;color:#e8e8e8;transform:translateX(-50%);">7</span>
<div class="b" style="left:153.0px;top:466.6px;width:42.0px;height:1.0px;background:#3a3a38;"></div>
<span class="t" style="left:173.3px;top:509.1px;font-size:20.60px;color:#e8e8e8;transform:translateX(-50%);">8</span>
<div class="b" style="left:153.0px;top:500.4px;width:42.0px;height:1.0px;background:#3a3a38;"></div>
<span class="t" style="left:173.3px;top:542.8px;font-size:20.60px;color:#e8e8e8;transform:translateX(-50%);">9</span>
<div class="b" style="left:153.0px;top:534.2px;width:42.0px;height:1.0px;background:#3a3a38;"></div>
<span class="t" style="left:173.3px;top:576.6px;font-size:20.60px;color:#e8e8e8;transform:translateX(-50%);">10</span>
<div class="b" style="left:153.0px;top:567.9px;width:42.0px;height:1.0px;background:#3a3a38;"></div>
<span class="t" style="left:173.3px;top:610.4px;font-size:20.60px;color:#e8e8e8;transform:translateX(-50%);">11</span>
<div class="b" style="left:153.0px;top:601.7px;width:42.0px;height:1.0px;background:#3a3a38;"></div>
<span class="t" style="left:173.3px;top:644.2px;font-size:20.60px;color:#e8e8e8;transform:translateX(-50%);">12</span>
<div class="b" style="left:153.0px;top:635.5px;width:42.0px;height:1.0px;background:#3a3a38;"></div>
<span class="t" style="left:173.3px;top:677.9px;font-size:20.60px;color:#e8e8e8;transform:translateX(-50%);">13</span>
<div class="b" style="left:153.0px;top:669.2px;width:42.0px;height:1.0px;background:#3a3a38;"></div>
<span class="t" style="left:173.3px;top:711.7px;font-size:20.60px;color:#e8e8e8;transform:translateX(-50%);">14</span>
<div class="b" style="left:153.0px;top:703.0px;width:42.0px;height:1.0px;background:#3a3a38;"></div>
<span class="t" style="left:173.3px;top:745.5px;font-size:20.60px;color:#e8e8e8;transform:translateX(-50%);">15</span>
<div class="b" style="left:153.0px;top:736.8px;width:42.0px;height:1.0px;background:#3a3a38;"></div>
<span class="t" style="left:173.3px;top:779.2px;font-size:20.60px;color:#e8e8e8;transform:translateX(-50%);">16</span>
<div class="b" style="left:153.0px;top:770.6px;width:42.0px;height:1.0px;background:#3a3a38;"></div>
<span class="t" style="left:173.3px;top:813.0px;font-size:20.60px;color:#e8e8e8;transform:translateX(-50%);">17</span>
<div class="b" style="left:153.0px;top:804.3px;width:42.0px;height:1.0px;background:#3a3a38;"></div>
<span class="t" style="left:173.3px;top:846.8px;font-size:20.60px;color:#e8e8e8;transform:translateX(-50%);">18</span>
<div class="b" style="left:153.0px;top:838.1px;width:42.0px;height:1.0px;background:#3a3a38;"></div>
<span class="t" style="left:173.3px;top:880.5px;font-size:20.60px;color:#e8e8e8;transform:translateX(-50%);">19</span>
<div class="b" style="left:153.0px;top:871.9px;width:42.0px;height:1.0px;background:#3a3a38;"></div>
<span class="t" style="left:173.3px;top:914.3px;font-size:20.60px;color:#e8e8e8;transform:translateX(-50%);">20</span>
<div class="b" style="left:153.0px;top:905.6px;width:42.0px;height:1.0px;background:#3a3a38;"></div>
<span class="t" style="left:173.3px;top:948.1px;font-size:20.60px;color:#e8e8e8;transform:translateX(-50%);">21</span>
<div class="b" style="left:153.0px;top:939.4px;width:42.0px;height:1.0px;background:#3a3a38;"></div>
<span class="t" style="left:173.3px;top:981.9px;font-size:20.60px;color:#e8e8e8;transform:translateX(-50%);">22</span>
<div class="b" style="left:153.0px;top:973.2px;width:42.0px;height:1.0px;background:#3a3a38;"></div>
<span class="t" style="left:173.3px;top:1015.6px;font-size:20.60px;color:#e8e8e8;transform:translateX(-50%);">23</span>
<div class="b" style="left:153.0px;top:1006.9px;width:42.0px;height:1.0px;background:#3a3a38;"></div>
<div class="b" style="left:308.5px;top:264.0px;width:1.0px;height:766.0px;background:#bcdcc2;opacity:.55;"></div>
<div class="b" style="left:421.0px;top:264.0px;width:1.0px;height:766.0px;background:#bcdcc2;opacity:.55;"></div>
<div class="b" style="left:533.5px;top:264.0px;width:1.0px;height:766.0px;background:#bcdcc2;opacity:.55;"></div>
<div class="b" style="left:646.0px;top:264.0px;width:1.0px;height:766.0px;background:#bcdcc2;opacity:.55;"></div>
<div class="b" style="left:758.5px;top:264.0px;width:1.0px;height:766.0px;background:#bcdcc2;opacity:.55;"></div>
<div class="b" style="left:871.0px;top:264.0px;width:1.0px;height:766.0px;background:#bcdcc2;opacity:.55;"></div>
<div class="b" style="left:983.5px;top:264.0px;width:1.0px;height:766.0px;background:#bcdcc2;opacity:.55;"></div>
<div class="b" style="left:1096.0px;top:264.0px;width:1.0px;height:766.0px;background:#bcdcc2;opacity:.55;"></div>
<div class="b" style="left:1208.5px;top:264.0px;width:1.0px;height:766.0px;background:#bcdcc2;opacity:.55;"></div>
<div class="b" style="left:1321.0px;top:264.0px;width:1.0px;height:766.0px;background:#bcdcc2;opacity:.55;"></div>
<div class="b" style="left:1433.5px;top:264.0px;width:1.0px;height:766.0px;background:#bcdcc2;opacity:.55;"></div>
<div class="b" style="left:1546.0px;top:264.0px;width:1.0px;height:766.0px;background:#bcdcc2;opacity:.55;"></div>
<div class="b" style="left:1658.5px;top:264.0px;width:1.0px;height:766.0px;background:#bcdcc2;opacity:.55;"></div>
<div class="b" style="left:196.0px;top:297.8px;width:1552.0px;height:1.0px;background:#bcdcc2;opacity:.55;"></div>
<div class="b" style="left:196.0px;top:331.5px;width:1552.0px;height:1.0px;background:#bcdcc2;opacity:.55;"></div>
<div class="b" style="left:196.0px;top:365.3px;width:1552.0px;height:1.0px;background:#bcdcc2;opacity:.55;"></div>
<div class="b" style="left:196.0px;top:399.1px;width:1552.0px;height:1.0px;background:#bcdcc2;opacity:.55;"></div>
<div class="b" style="left:196.0px;top:432.9px;width:1552.0px;height:1.0px;background:#bcdcc2;opacity:.55;"></div>
<div class="b" style="left:196.0px;top:466.6px;width:1552.0px;height:1.0px;background:#bcdcc2;opacity:.55;"></div>
<div class="b" style="left:196.0px;top:500.4px;width:1552.0px;height:1.0px;background:#bcdcc2;opacity:.55;"></div>
<div class="b" style="left:196.0px;top:534.2px;width:1552.0px;height:1.0px;background:#bcdcc2;opacity:.55;"></div>
<div class="b" style="left:196.0px;top:567.9px;width:1552.0px;height:1.0px;background:#bcdcc2;opacity:.55;"></div>
<div class="b" style="left:196.0px;top:601.7px;width:1552.0px;height:1.0px;background:#bcdcc2;opacity:.55;"></div>
<div class="b" style="left:196.0px;top:635.5px;width:1552.0px;height:1.0px;background:#bcdcc2;opacity:.55;"></div>
<div class="b" style="left:196.0px;top:669.2px;width:1552.0px;height:1.0px;background:#bcdcc2;opacity:.55;"></div>
<div class="b" style="left:196.0px;top:703.0px;width:1552.0px;height:1.0px;background:#bcdcc2;opacity:.55;"></div>
<div class="b" style="left:196.0px;top:736.8px;width:1552.0px;height:1.0px;background:#bcdcc2;opacity:.55;"></div>
<div class="b" style="left:196.0px;top:770.6px;width:1552.0px;height:1.0px;background:#bcdcc2;opacity:.55;"></div>
<div class="b" style="left:196.0px;top:804.3px;width:1552.0px;height:1.0px;background:#bcdcc2;opacity:.55;"></div>
<div class="b" style="left:196.0px;top:838.1px;width:1552.0px;height:1.0px;background:#bcdcc2;opacity:.55;"></div>
<div class="b" style="left:196.0px;top:871.9px;width:1552.0px;height:1.0px;background:#bcdcc2;opacity:.55;"></div>
<div class="b" style="left:196.0px;top:905.6px;width:1552.0px;height:1.0px;background:#bcdcc2;opacity:.55;"></div>
<div class="b" style="left:196.0px;top:939.4px;width:1552.0px;height:1.0px;background:#bcdcc2;opacity:.55;"></div>
<div class="b" style="left:196.0px;top:973.2px;width:1552.0px;height:1.0px;background:#bcdcc2;opacity:.55;"></div>
<div class="b" style="left:196.0px;top:1006.9px;width:1552.0px;height:1.0px;background:#bcdcc2;opacity:.55;"></div>
<div class="b" style="left:195.2px;top:263.0px;width:114.0px;height:35.8px;border:1.6px solid #2a6b48;"></div>
<div class="b" style="left:305.5px;top:295.3px;width:5.2px;height:5.2px;background:#2a6b48;border:1px solid #c7e4cb;box-sizing:content-box;"></div>
<!-- poem -->
<div class="b" style="left:195.5px;top:300.0px;width:400.0px;height:280.0px;overflow:hidden;"><span class="t" style="left:-6.2px;top:46.6px;font-size:43.70px;color:#761111;font-family:'Liberation Serif','Noto Serif CJK SC',serif;">送玫瑰做好事不留名</span><span class="t" style="left:37.5px;top:102.2px;font-size:43.70px;color:#761111;font-family:'Liberation Serif','Noto Serif CJK SC',serif;">千里迢迢找到你</span><span class="t" style="left:37.5px;top:156.8px;font-size:43.70px;color:#761111;font-family:'Liberation Serif','Noto Serif CJK SC',serif;">送完悄悄地离开</span><span class="t" style="left:15.7px;top:211.8px;font-size:43.70px;color:#761111;font-family:'Liberation Serif','Noto Serif CJK SC',serif;">彷佛我未曾来过～</span></div>
<!-- keys -->
<div class="b" style="left:210.5px;top:712.0px;width:113.0px;height:50.5px;background:#258d95;border-radius:23px;box-shadow:0 1px 0 1px rgba(150,232,232,.55);"></div>
<span class="t" style="left:226.0px;top:725.5px;font-size:22.70px;color:#a8e4e6;font-family:'Liberation Mono',monospace;">Return</span>
<div class="b" style="left:210.5px;top:770.5px;width:141.5px;height:50.0px;background:#258d95;border-radius:23px;box-shadow:0 1px 0 1px rgba(150,232,232,.55);"></div>
<span class="t" style="left:225.0px;top:783.7px;font-size:22.90px;color:#a8e4e6;font-family:'Liberation Mono',monospace;">Ctrl + V</span>
<div class="b" style="left:210.5px;top:829.0px;width:44.0px;height:50.0px;background:#258d95;border-radius:23px;box-shadow:0 1px 0 1px rgba(150,232,232,.55);"></div>
<span class="t" style="left:226.0px;top:842.3px;font-size:22.70px;color:#c0f0f0;font-family:'Liberation Mono',monospace;">.</span>
<div class="b" style="left:210.5px;top:887.5px;width:99.5px;height:50.0px;background:#258d95;border-radius:23px;box-shadow:0 1px 0 1px rgba(150,232,232,.55);"></div>
<span class="t" style="left:226.0px;top:900.8px;font-size:22.70px;color:#a8e4e6;font-family:'Liberation Mono',monospace;">close</span>
<div class="b" style="left:210.3px;top:945.3px;width:124.7px;height:59.7px;background:#06768a;border-radius:24px;box-shadow:0 1px 0 1px rgba(150,232,232,.55);"></div>
<span class="t" style="left:228.0px;top:959.3px;font-size:29.60px;color:#c8f8fb;font-family:'Liberation Mono',monospace;">Space</span>
<!-- sheettabs -->
<div class="b" style="left:150.0px;top:1030.5px;width:428.5px;height:22.0px;background:#262624;"></div>
<svg class="b" style="left:172.5px;top:1038.0px;" width="5" height="9" viewBox="0 0 5 9"><path d="M5 0V9L0 4.5Z" fill="#b0b0b0"/></svg>
<svg class="b" style="left:196.0px;top:1038.0px;" width="5" height="9" viewBox="0 0 5 9"><path d="M0 0V9L5 4.5Z" fill="#c0c0c0"/></svg>
<div class="b" style="left:236.0px;top:1030.5px;width:70.0px;height:20.3px;background:#ffffff;"></div>
<div class="b" style="left:236.0px;top:1050.8px;width:70.0px;height:2.0px;background:#1c3b2b;"></div>
<span class="t" style="left:271.0px;top:1032.2px;font-size:15.20px;color:#1f6b45;font-weight:700;letter-spacing:-0.35px;transform:translateX(-50%);">Sheet1</span>
<span class="t" style="left:341.0px;top:1032.2px;font-size:15.20px;color:#ececec;transform:translateX(-50%);">Sheet2</span>
<span class="t" style="left:410.5px;top:1032.2px;font-size:15.20px;color:#ececec;transform:translateX(-50%);">Sheet3</span>
<div class="b" style="left:376.0px;top:1034.0px;width:1.0px;height:17.0px;background:#8a8a88;"></div>
<div class="b" style="left:445.5px;top:1034.0px;width:1.0px;height:17.0px;background:#8a8a88;"></div>
<svg class="b" style="left:473.5px;top:1033.5px;" width="18" height="18" viewBox="0 0 18 18"><circle cx="9" cy="9" r="8" fill="none" stroke="#e0e0e0" stroke-width="1.3"/><path d="M9 5V13 M5 9H13" stroke="#e0e0e0" stroke-width="1.3"/></svg>
<!-- statusbar -->
<svg class="b" style="left:159.0px;top:1059.5px;" width="17" height="16" viewBox="0 0 17 16"><path d="M.7 .7H15.5V5 M.7 .7V14.5H6 M.7 3.2H15.5 M3 6.5H6 M3 9.5H5 M3 12H5" fill="none" stroke="#d0d0d0" stroke-width="1.2"/><circle cx="11.5" cy="11" r="4" fill="none" stroke="#e8e8e8" stroke-width="1.5"/><circle cx="11.5" cy="11" r="1.3" fill="#e8e8e8"/></svg>
<div class="b" style="left:1658.0px;top:1066.5px;width:38.5px;height:1.5px;background:#e6e6e6;"></div>
<svg class="b" style="left:1702.0px;top:1062.0px;" width="10" height="10" viewBox="0 0 10 10"><path d="M5 0V10 M0 5H10" stroke="#c4c4c4" stroke-width="1"/></svg>
<span class="t" style="left:1726.7px;top:1060.6px;font-size:13.50px;color:#e8e8e8;">156%</span>
<!-- scrollbars -->
<div class="b" style="left:1747.5px;top:232.0px;width:22.5px;height:798.5px;background:#262624;"></div>
<div class="b" style="left:1749.5px;top:233.0px;width:18.0px;height:17.5px;background:#4d4d4b;"></div>
<svg class="b" style="left:1754.0px;top:238.5px;" width="9" height="5" viewBox="0 0 9 5"><path d="M0 5H9L4.5 0Z" fill="#8c8c8a"/></svg>
<div class="b" style="left:1749.5px;top:251.5px;width:18.0px;height:724.5px;background:#4f4f4d;"></div>
<div class="b" style="left:1749.5px;top:976.0px;width:18.0px;height:37.5px;background:#2e2e2c;"></div>
<div class="b" style="left:1749.5px;top:1013.5px;width:18.0px;height:16.5px;background:#4d4d4b;"></div>
<svg class="b" style="left:1754.0px;top:1019.5px;" width="9" height="5" viewBox="0 0 9 5"><path d="M0 0H9L4.5 5Z" fill="#a0a09e"/></svg>
<div class="b" style="left:1658.0px;top:1030.5px;width:112.0px;height:22.0px;background:#262624;"></div>
<div class="b" style="left:1658.0px;top:1033.0px;width:13.0px;height:17.5px;background:#4d4d4b;"></div>
<div class="b" style="left:1671.0px;top:1033.0px;width:59.0px;height:17.5px;background:#333331;"></div>
<div class="b" style="left:1730.0px;top:1033.0px;width:17.5px;height:17.5px;background:#4d4d4b;"></div>
<svg class="b" style="left:1737.0px;top:1037.5px;" width="5" height="9" viewBox="0 0 5 9"><path d="M0 0V9L5 4.5Z" fill="#a8a8a6"/></svg>
<!-- vba_frame -->
<div class="b" style="left:578.5px;top:130.5px;width:1079.0px;height:948.5px;background:#cfe6d3;box-shadow:0 0 0 1px rgba(120,130,120,.55),0 2px 10px rgba(0,0,0,.35);"></div>
<div class="b" style="left:578.5px;top:130.5px;width:1079.0px;height:33.0px;background:#ffffff;"></div>
<div class="b" style="left:578.5px;top:163.5px;width:1079.0px;height:113.0px;background:linear-gradient(90deg,#d8ead9 0%,#d2e7d5 40%,#cbe4cf 100%);"></div>
<svg class="b" style="left:587.0px;top:137.0px;" width="19" height="19" viewBox="0 0 19 19"><rect x="4.5" y="5.5" width="13.5" height="12.5" fill="#fdfdfd" stroke="#3a4a5a" stroke-width="1.2"/><rect x="4.5" y="5.5" width="13.5" height="3" fill="#3f78c0"/><path d="M7 12H16 M7 14.5H16 M9.5 10V17 M13 10V17" stroke="#c9d6e6" stroke-width=".8"/><circle cx="5.2" cy="3" r="2.6" fill="#b4201c"/><path d="M1 8.5L6 6.5L7.5 9.5L2.5 11Z" fill="#e8d43c" stroke="#7a6a10" stroke-width=".6"/></svg>
<span class="t" style="left:609.5px;top:140.0px;font-size:13.70px;color:#222;letter-spacing:0.34px;">Microsoft Visual Basic for Applications - <span style="letter-spacing:0">写代码专用工作簿</span>.xlsx - [<span style="letter-spacing:0">模块</span>1 (<span style="letter-spacing:0">代码</span>)]</span>
<div class="b" style="left:1521.0px;top:146.5px;width:11.5px;height:1.2px;background:#333;"></div>
<div class="b" style="left:1573.0px;top:141.0px;width:11.5px;height:11.5px;border:1.2px solid #333;"></div>
<svg class="b" style="left:1626.0px;top:141.0px;" width="11.5" height="11.5" viewBox="0 0 11.5 11.5"><path d="M.5 .5L11 11 M11 .5L.5 11" stroke="#333" stroke-width="1.2"/></svg>
<!-- vba_toolbars -->
<div class="b" style="left:583.0px;top:165.5px;width:381.0px;height:24.5px;background:linear-gradient(180deg,#e9f2ea 0%,#dcebde 50%,#cfe4d2 100%);border-radius:2px;"></div>
<svg class="b" style="left:588.0px;top:170.0px;" width="2" height="16" viewBox="0 0 2 16"><rect x="0" y="0" width="2" height="2" fill="#9aa89c"/><rect x="0" y="4" width="2" height="2" fill="#9aa89c"/><rect x="0" y="8" width="2" height="2" fill="#9aa89c"/><rect x="0" y="12" width="2" height="2" fill="#9aa89c"/></svg>
<div class="b" style="left:962.0px;top:164.5px;width:14.5px;height:26.5px;background:linear-gradient(180deg,#c2c4c2 0%,#9fa19f 55%,#8a8c8a 100%);border-radius:0 4px 4px 0;"></div><div class="b" style="left:965.5px;top:180.5px;width:7.5px;height:1.3px;background:#111;"></div><svg class="b" style="left:965.5px;top:183.0px;" width="7.5" height="4.2" viewBox="0 0 7.5 4.2"><path d="M0 0H7.5L3.75 4.2Z" fill="#0a0a0a"/></svg>
<svg class="b" style="left:595.0px;top:168.0px;" width="18" height="18" viewBox="0 0 18 18"><rect x="1" y="1" width="13" height="11" fill="#dfe8f4" stroke="#4a6a9c" stroke-width="1"/><rect x="1" y="1" width="13" height="2.6" fill="#5a86c8"/><rect x="4" y="5" width="9" height="10.5" fill="#f4f7fb" stroke="#6a86b0" stroke-width=".9"/><path d="M5.8 8H11 M5.8 10.3H11 M5.8 12.6H11" stroke="#7f96bb" stroke-width="1"/><path d="M12.5 12H17.5L15 16.5Z" fill="#3f6fc4"/></svg>
<svg class="b" style="left:622.0px;top:168.0px;" width="18" height="18" viewBox="0 0 18 18"><rect x="1" y="2.5" width="9.5" height="11" fill="#f4f7fb" stroke="#5a78a8" stroke-width="1"/><path d="M8.5 9H14L11.2 14.5Z M10 4.5H12.5V9.5H10Z" fill="#3f6fc4"/></svg>
<svg class="b" style="left:646.0px;top:168.0px;" width="18" height="18" viewBox="0 0 18 18"><path d="M2 1L2 9L4.2 7L6 10.5L7.5 9.8L5.8 6.4H8.5Z" fill="#f8f8f8" stroke="#5a6a8a" stroke-width=".8"/><rect x="3" y="11.5" width="15" height="4.5" fill="#f0cc5a" stroke="#9a7f1e" stroke-width=".8"/><path d="M6 11.5V14 M9 11.5V14 M12 11.5V14 M15 11.5V14" stroke="#9a7f1e" stroke-width=".6"/></svg>
<svg class="b" style="left:672.0px;top:168.0px;" width="18" height="18" viewBox="0 0 18 18"><rect x="1" y="1" width="7" height="6" fill="#dfe8f4" stroke="#6a7fa6" stroke-width=".9"/><path d="M9 4L9 11L11 9.3L12.5 12.3L13.8 11.7L12.3 8.8H14.6Z" fill="#f8f8f8" stroke="#5a6a8a" stroke-width=".8"/><rect x="8.5" y="12.5" width="9" height="4" fill="#f0cc5a" stroke="#9a7f1e" stroke-width=".8"/><circle cx="5" cy="9.5" r="1.8" fill="#6a8ac0"/></svg>
<span class="t" style="left:698.5px;top:170.4px;font-size:14.50px;color:#2f4f9a;font-family:'Liberation Serif',serif;font-weight:700;">A</span>
<svg class="b" style="left:706.0px;top:168.0px;" width="18" height="18" viewBox="0 0 18 18"><path d="M1 8.2H6V6L9.5 9L6 12V9.8H1Z" fill="#4a7ad0"/><path d="M1 13.5H9" stroke="#6a8ac0" stroke-width="1" stroke-dasharray="1.3 1"/></svg>
<div class="b" style="left:721.0px;top:168.0px;width:1.0px;height:19.0px;background:#b4c4b6;"></div>
<svg class="b" style="left:727.5px;top:168.0px;" width="18" height="18" viewBox="0 0 18 18"><path d="M1 5H4.5V3L7.5 6L4.5 9V7H1Z" fill="#3f6fd0"/><rect x="5" y="2" width="12" height="1.7" fill="#111"/><rect x="8.5" y="4.7" width="8.5" height="1.7" fill="#111"/><rect x="8.5" y="7.4" width="8.5" height="1.7" fill="#111"/><rect x="5" y="10.1" width="12" height="1.7" fill="#111"/><rect x="5" y="12.8" width="9" height="1.7" fill="#111"/><path d="M8 1V17" stroke="#333" stroke-width=".8" stroke-dasharray="1.5 1.2"/></svg>
<svg class="b" style="left:753.0px;top:168.0px;" width="18" height="18" viewBox="0 0 18 18"><path d="M7.5 5H4V3L1 6L4 9V7H7.5Z" fill="#3f6fd0"/><rect x="5" y="2" width="12" height="1.7" fill="#111"/><rect x="8.5" y="4.7" width="8.5" height="1.7" fill="#111"/><rect x="8.5" y="7.4" width="8.5" height="1.7" fill="#111"/><rect x="5" y="10.1" width="12" height="1.7" fill="#111"/><rect x="5" y="12.8" width="9" height="1.7" fill="#111"/><path d="M8 1V17" stroke="#333" stroke-width=".8" stroke-dasharray="1.5 1.2"/></svg>
<div class="b" style="left:776.5px;top:168.0px;width:1.0px;height:19.0px;background:#b4c4b6;"></div>
<svg class="b" style="left:783.5px;top:168.0px;" width="18" height="18" viewBox="0 0 18 18"><path d="M4.2 9V3.6C4.2 2.2 6 2.2 6 3.6V2.4C6 1 8 1 8 2.4V2.8C8 1.6 10 1.6 10 2.8V3.8C10 2.8 11.8 2.8 11.8 4V10.5C11.8 13.5 10 15.5 7.5 15.5C5 15.5 3.5 13.5 1 10.2C.4 9 1.8 8 3 9.4Z" fill="#f2c14e" stroke="#b07a18" stroke-width=".9" stroke-linejoin="round"/></svg>
<svg class="b" style="left:809.5px;top:168.0px;" width="18" height="18" viewBox="0 0 18 18"><rect x="0" y="0" width="15" height="16.5" fill="#fff"/><rect x="1" y="2" width="14" height="1.7" fill="#111"/><rect x="4" y="4.7" width="10" height="1.7" fill="#3fd8d0"/><rect x="4" y="7.4" width="10" height="1.7" fill="#3fd8d0"/><rect x="4" y="10.1" width="10" height="1.7" fill="#3fd8d0"/><rect x="4" y="12.8" width="10" height="1.7" fill="#111"/><rect x="1" y="15.5" width="14" height="1.7" fill="#111"/></svg>
<svg class="b" style="left:835.5px;top:168.0px;" width="18" height="18" viewBox="0 0 18 18"><rect x="0" y="3" width="15" height="13.5" fill="#fff"/><path d="M5 4.5C5 .5 12 .5 12 4.5C12 7 8 7 7 5.5" fill="none" stroke="#3f6fd0" stroke-width="1.6"/><path d="M1 2L6.5 2.5L3 6.5Z" fill="#2f5fc0"/><g transform="translate(0 5.5)"><rect x="4" y="2" width="10" height="1.7" fill="#3fd8d0"/><rect x="4" y="4.7" width="10" height="1.7" fill="#3fd8d0"/><rect x="4" y="7.4" width="10" height="1.7" fill="#111"/><rect x="1" y="10.1" width="13" height="1.7" fill="#111"/></g></svg>
<div class="b" style="left:857.0px;top:168.0px;width:1.0px;height:19.0px;background:#b4c4b6;"></div>
<svg class="b" style="left:864.0px;top:168.0px;" width="18" height="18" viewBox="0 0 18 18"><path d="M1 16L9 5" stroke="#4a6ab0" stroke-width="1.6"/><path d="M7 4.5L14 2.5C16 5 15 10 12.5 12.5L9.5 9.5L7.5 12Z" fill="#3f6fd8" stroke="#24479a" stroke-width=".7"/></svg>
<svg class="b" style="left:889.0px;top:168.0px;" width="18" height="18" viewBox="0 0 18 18"><path d="M1 16L9 5" stroke="#b9c6bb" stroke-width="1.6"/><path d="M7 4.5L14 2.5C16 5 15 10 12.5 12.5L9.5 9.5L7.5 12Z" fill="#c3cec5"/><path d="M2 2L6 6 M6 2L2 6" stroke="#c3cec5" stroke-width="1.3"/></svg>
<svg class="b" style="left:914.5px;top:168.0px;" width="18" height="18" viewBox="0 0 18 18"><path d="M1 16L9 5" stroke="#b9c6bb" stroke-width="1.6"/><path d="M7 4.5L14 2.5C16 5 15 10 12.5 12.5L9.5 9.5L7.5 12Z" fill="#c3cec5"/><path d="M2 2L6 6 M6 2L2 6" stroke="#c3cec5" stroke-width="1.3"/></svg>
<svg class="b" style="left:940.0px;top:168.0px;" width="18" height="18" viewBox="0 0 18 18"><path d="M1 16L9 5" stroke="#b9c6bb" stroke-width="1.6"/><path d="M7 4.5L14 2.5C16 5 15 10 12.5 12.5L9.5 9.5L7.5 12Z" fill="#c3cec5"/><path d="M2 2L6 6 M6 2L2 6" stroke="#c3cec5" stroke-width="1.3"/></svg>
<div class="b" style="left:609.0px;top:193.5px;width:355.0px;height:25.0px;background:linear-gradient(180deg,#e9f2ea 0%,#dcebde 50%,#cfe4d2 100%);border-radius:2px;"></div>
<svg class="b" style="left:613.5px;top:198.0px;" width="2" height="16" viewBox="0 0 2 16"><rect x="0" y="0" width="2" height="2" fill="#9aa89c"/><rect x="0" y="4" width="2" height="2" fill="#9aa89c"/><rect x="0" y="8" width="2" height="2" fill="#9aa89c"/><rect x="0" y="12" width="2" height="2" fill="#9aa89c"/></svg>
<div class="b" style="left:962.0px;top:193.5px;width:14.5px;height:26.0px;background:linear-gradient(180deg,#c2c4c2 0%,#9fa19f 55%,#8a8c8a 100%);border-radius:0 4px 4px 0;"></div><div class="b" style="left:965.5px;top:209.0px;width:7.5px;height:1.3px;background:#111;"></div><svg class="b" style="left:965.5px;top:211.5px;" width="7.5" height="4.2" viewBox="0 0 7.5 4.2"><path d="M0 0H7.5L3.75 4.2Z" fill="#0a0a0a"/></svg>
<svg class="b" style="left:621.0px;top:196.0px;" width="18" height="18" viewBox="0 0 18 18"><path d="M1.5 2.5V13L11 13Z" fill="#3f78d0" stroke="#1e4a96" stroke-width=".8"/><path d="M8 11L15.5 1.5L17 3L10 12Z" fill="#e8c07a" stroke="#8a6a30" stroke-width=".7"/><rect x="1" y="13.6" width="16" height="3" fill="#f0b23c" stroke="#9a7214" stroke-width=".6"/></svg>
<div class="b" style="left:644.0px;top:196.5px;width:1.0px;height:19.0px;background:#b4c4b6;"></div>
<svg class="b" style="left:650.5px;top:197.5px;" width="18" height="18" viewBox="0 0 18 18"><path d="M4.5 3L12 8.2L4.5 13.5Z" fill="#2f9e33" stroke="#1d6e22" stroke-width=".6"/></svg>
<svg class="b" style="left:676.0px;top:197.5px;" width="18" height="18" viewBox="0 0 18 18"><rect x="4" y="3.5" width="3.2" height="10" fill="#4f74d6" stroke="#2d4aa0" stroke-width=".6"/><rect x="9" y="3.5" width="3.2" height="10" fill="#4f74d6" stroke="#2d4aa0" stroke-width=".6"/></svg>
<svg class="b" style="left:701.5px;top:197.5px;" width="18" height="18" viewBox="0 0 18 18"><rect x="3.2" y="3.5" width="10" height="10" fill="#5a83e0" stroke="#2d4aa0" stroke-width=".9"/></svg>
<div class="b" style="left:725.0px;top:196.5px;width:1.0px;height:19.0px;background:#b4c4b6;"></div>
<svg class="b" style="left:732.5px;top:197.0px;" width="18" height="18" viewBox="0 0 18 18"><path d="M4.2 9V3.6C4.2 2.2 6 2.2 6 3.6V2.4C6 1 8 1 8 2.4V2.8C8 1.6 10 1.6 10 2.8V3.8C10 2.8 11.8 2.8 11.8 4V10.5C11.8 13.5 10 15.5 7.5 15.5C5 15.5 3.5 13.5 1 10.2C.4 9 1.8 8 3 9.4Z" fill="#f2c14e" stroke="#b07a18" stroke-width=".9" stroke-linejoin="round"/></svg>
<svg class="b" style="left:757.0px;top:196.0px;" width="18" height="18" viewBox="0 0 18 18"><path d="M6 7C1 7 1 1.5 5.5 1.5H8" fill="none" stroke="#3f6fd0" stroke-width="1.7"/><path d="M7 -.5L10.5 2L7 4.5Z" fill="#3f6fd0"/><g transform="translate(2 3)"><rect x="8" y="2" width="7" height="1.7" fill="#111"/><rect x="8" y="4.7" width="7" height="1.7" fill="#111"/><rect x="5" y="7.4" width="10" height="1.7" fill="#111"/><rect x="8" y="10.1" width="7" height="1.7" fill="#111"/><rect x="8" y="12.8" width="7" height="1.7" fill="#111"/></g></svg>
<svg class="b" style="left:783.0px;top:196.0px;" width="18" height="18" viewBox="0 0 18 18"><path d="M3 2.5H1.5V13H4" fill="none" stroke="#bccabe" stroke-width="1.4"/><path d="M3.5 10.5L7 13L3.5 15.5Z" fill="#bccabe"/><g transform="translate(2 1)"><rect x="6" y="2" width="9" height="1.7" fill="#bccabe"/><rect x="6" y="4.7" width="9" height="1.7" fill="#bccabe"/><rect x="6" y="7.4" width="9" height="1.7" fill="#bccabe"/><rect x="6" y="10.1" width="9" height="1.7" fill="#bccabe"/><rect x="6" y="12.8" width="9" height="1.7" fill="#bccabe"/></g></svg>
<svg class="b" style="left:808.0px;top:196.0px;" width="18" height="18" viewBox="0 0 18 18"><path d="M2 6C2 1 8 1 8 5" fill="none" stroke="#bccabe" stroke-width="1.5"/><path d="M6 3.5H10.5L8.2 7Z" fill="#bccabe"/><g transform="translate(3 5)"><rect x="3" y="2" width="11" height="1.7" fill="#bccabe"/><rect x="6" y="4.7" width="8" height="1.7" fill="#bccabe"/><rect x="6" y="7.4" width="8" height="1.7" fill="#bccabe"/><rect x="6" y="10.1" width="8" height="1.7" fill="#bccabe"/></g></svg>
<div class="b" style="left:831.5px;top:196.5px;width:1.0px;height:19.0px;background:#b4c4b6;"></div>
<svg class="b" style="left:838.5px;top:196.0px;" width="18" height="18" viewBox="0 0 18 18"><rect x="1" y="2" width="15" height="12.5" fill="#eef2f8" stroke="#4a5f86" stroke-width="1"/><rect x="1" y="2" width="15" height="3.2" fill="#4a78c0"/><path d="M3.5 8H8 M3.5 11H8" stroke="#7f93b8" stroke-width="1.3"/><rect x="10" y="9" width="3" height="3" fill="#e8b04a"/></svg>
<svg class="b" style="left:864.5px;top:196.0px;" width="18" height="18" viewBox="0 0 18 18"><rect x="1" y="2" width="15" height="12.5" fill="#eef2f8" stroke="#4a5f86" stroke-width="1"/><rect x="1" y="2" width="15" height="3.2" fill="#4a78c0"/><path d="M3.5 8H8 M3.5 11H8" stroke="#7f93b8" stroke-width="1.3"/><rect x="10" y="9" width="3" height="3" fill="#e8b04a"/><rect x="-1" y="6" width="2.6" height="7" rx="1" fill="#e0281c"/><circle cx=".3" cy="14.8" r="1.4" fill="#e0281c"/></svg>
<svg class="b" style="left:890.0px;top:196.0px;" width="18" height="18" viewBox="0 0 18 18"><rect x="1" y="2" width="15" height="12.5" fill="#eef2f8" stroke="#4a5f86" stroke-width="1"/><rect x="1" y="2" width="15" height="3.2" fill="#4a78c0"/><path d="M3.5 8H8 M3.5 11H8" stroke="#7f93b8" stroke-width="1.3"/><rect x="10" y="9" width="3" height="3" fill="#e8b04a"/><g transform="translate(-1 9)"><circle cx="3.5" cy="5" r="3" fill="none" stroke="#1e2a4a" stroke-width="1.5"/><circle cx="11" cy="5" r="3" fill="none" stroke="#1e2a4a" stroke-width="1.5"/><path d="M6.5 4.5H8" stroke="#1e2a4a" stroke-width="1.2"/></g></svg>
<svg class="b" style="left:914.5px;top:196.0px;" width="18" height="18" viewBox="0 0 18 18"><g transform="translate(0 3)"><circle cx="4" cy="9" r="3" fill="none" stroke="#1e2a3a" stroke-width="1.7"/><circle cx="12" cy="9" r="3" fill="none" stroke="#1e2a3a" stroke-width="1.7"/><path d="M1.5 7.5L4.5 1.5 M14.5 7.5V1 M7 8.5H9" stroke="#1e2a3a" stroke-width="1.5" fill="none"/></g></svg>
<svg class="b" style="left:940.0px;top:196.0px;" width="18" height="18" viewBox="0 0 18 18"><g fill="#dfe6e0" stroke="#c0ccc2" stroke-width=".8"><circle cx="4" cy="4" r="2.6"/><circle cx="9" cy="7.5" r="2.6"/><circle cx="14" cy="11" r="2.6"/><circle cx="5" cy="11" r="2.6"/><circle cx="10" cy="14.5" r="2.6"/></g></svg>
<div class="b" style="left:583.0px;top:249.5px;width:749.0px;height:24.5px;background:linear-gradient(180deg,#e9f2ea 0%,#dcebde 50%,#cfe4d2 100%);border-radius:2px;"></div>
<svg class="b" style="left:588.5px;top:254.0px;" width="2" height="16" viewBox="0 0 2 16"><rect x="0" y="0" width="2" height="2" fill="#9aa89c"/><rect x="0" y="4" width="2" height="2" fill="#9aa89c"/><rect x="0" y="8" width="2" height="2" fill="#9aa89c"/><rect x="0" y="12" width="2" height="2" fill="#9aa89c"/></svg>
<div class="b" style="left:1330.0px;top:249.0px;width:14.5px;height:26.0px;background:linear-gradient(180deg,#c2c4c2 0%,#9fa19f 55%,#8a8c8a 100%);border-radius:0 4px 4px 0;"></div><div class="b" style="left:1333.5px;top:264.5px;width:7.5px;height:1.3px;background:#111;"></div><svg class="b" style="left:1333.5px;top:267.0px;" width="7.5" height="4.2" viewBox="0 0 7.5 4.2"><path d="M0 0H7.5L3.75 4.2Z" fill="#0a0a0a"/></svg>
<svg class="b" style="left:596.5px;top:252.0px;" width="18" height="18" viewBox="0 0 18 18"><rect x=".8" y=".8" width="16.8" height="16" fill="#e6f2e6" stroke="#2f7d3f" stroke-width="1.5"/><path d="M4 4L13.5 13.5 M13.5 4L4 13.5" stroke="#2f8d3f" stroke-width="2.6"/><path d="M10 3.5H15.5V8" fill="none" stroke="#8cc49a" stroke-width="1"/></svg>
<svg class="b" style="left:623.0px;top:252.0px;" width="18" height="18" viewBox="0 0 18 18"><rect x=".7" y="1" width="15" height="15" fill="#fbfbfb" stroke="#5a5a5a" stroke-width="1.1"/><rect x=".7" y="1" width="15" height="3" fill="#5a5a5a"/><path d="M3 8H7 M3 12H7" stroke="#555" stroke-width="1.2"/><rect x="8.5" y="6.5" width="5.5" height="3" fill="#f0a03c"/><rect x="8.5" y="11" width="5.5" height="3" fill="#f0a03c"/></svg>
<svg class="b" style="left:646.0px;top:258.5px;" width="8" height="4.5" viewBox="0 0 8 4.5"><path d="M0 0H8L4 4.5Z" fill="#111"/></svg>
<svg class="b" style="left:662.0px;top:252.0px;" width="18" height="18" viewBox="0 0 18 18"><path d="M.8 .8H15.5V16.4H2.6L.8 14.6Z" fill="#5a6fd0" stroke="#2f3f9a" stroke-width="1"/><rect x="3.5" y=".8" width="9.5" height="6.5" fill="#f4f6fc"/><rect x="4.5" y="10.5" width="8" height="6" fill="#2f3f8a"/><rect x="6" y="11.8" width="2.5" height="3.6" fill="#e8ecf8"/></svg>
<div class="b" style="left:684.5px;top:252.5px;width:1.0px;height:19.0px;background:#b4c4b6;"></div>
<svg class="b" style="left:693.5px;top:252.0px;" width="18" height="18" viewBox="0 0 18 18"><path d="M3.5 1L8 11 M9 1L4.5 11" stroke="#c0c8c0" stroke-width="1.5"/><circle cx="3.5" cy="13.5" r="2.2" fill="none" stroke="#c0c8c0" stroke-width="1.4"/><circle cx="9" cy="13.5" r="2.2" fill="none" stroke="#c0c8c0" stroke-width="1.4"/></svg>
<svg class="b" style="left:717.0px;top:252.0px;" width="18" height="18" viewBox="0 0 18 18"><rect x=".7" y="1" width="8.5" height="10" fill="#e9eee9" stroke="#c4ccc4" stroke-width="1"/><rect x="6.5" y="5.5" width="9.5" height="10.5" fill="#eef2ee" stroke="#c4ccc4" stroke-width="1"/></svg>
<svg class="b" style="left:742.0px;top:252.0px;" width="18" height="18" viewBox="0 0 18 18"><rect x=".8" y="2.5" width="12" height="13.5" rx="1" fill="#e8b03c" stroke="#8a6214" stroke-width="1"/><rect x="4" y=".8" width="6" height="3.6" fill="#c8c8c8" stroke="#555" stroke-width=".8"/><rect x="7.5" y="8" width="10" height="8.8" fill="#f6f6fa" stroke="#5a5a6a" stroke-width="1"/><path d="M9.5 11H15.5 M9.5 13.5H15.5" stroke="#8a8aa0" stroke-width=".9"/></svg>
<svg class="b" style="left:768.0px;top:252.0px;" width="18" height="18" viewBox="0 0 18 18"><g fill="#4a6ac8" stroke="#24367a" stroke-width=".8"><rect x="1" y="7" width="6.5" height="9.5" rx="1"/><rect x="10" y="7" width="6.5" height="9.5" rx="1"/><rect x="2.5" y="1.5" width="3.8" height="6"/><rect x="11.3" y="1.5" width="3.8" height="6"/><rect x="7.2" y="8" width="3.2" height="3.5"/></g><rect x="2" y="12" width="4.5" height="3.4" fill="#c8d4f4"/><rect x="11" y="12" width="4.5" height="3.4" fill="#c8d4f4"/></svg>
<div class="b" style="left:791.5px;top:252.5px;width:1.0px;height:19.0px;background:#b4c4b6;"></div>
<svg class="b" style="left:799.0px;top:252.0px;" width="18" height="18" viewBox="0 0 18 18"><path d="M2 2L2.6 8L8.5 7L6.4 5.3C9.5 3.6 12.2 6 11.8 9C11.5 11.8 9.5 13.6 6.5 14.5L7.5 16.4C12.5 15.2 15.5 11.8 15 8C14.4 3.4 9 1.4 4.8 4Z" fill="#3f6fd8" stroke="#2a4fa8" stroke-width=".6"/></svg>
<svg class="b" style="left:823.5px;top:252.0px;" width="18" height="18" viewBox="0 0 18 18"><path d="M14 2L13.4 8L7.5 7L9.6 5.3C6.5 3.6 3.8 6 4.2 9C4.5 11 5.5 12.4 7.5 13.2L6.5 15C3 13.8 1.2 11 1.4 8C1.8 3.4 7 1.4 11.2 4Z" fill="#cdd6cf"/></svg>
<div class="b" style="left:846.5px;top:252.5px;width:1.0px;height:19.0px;background:#b4c4b6;"></div>
<svg class="b" style="left:852.5px;top:253.0px;" width="18" height="18" viewBox="0 0 18 18"><path d="M4.5 3L12 8.2L4.5 13.5Z" fill="#2f9e33" stroke="#1d6e22" stroke-width=".6"/></svg>
<svg class="b" style="left:878.8px;top:253.0px;" width="18" height="18" viewBox="0 0 18 18"><rect x="4" y="3.5" width="3.2" height="10" fill="#4f74d6" stroke="#2d4aa0" stroke-width=".6"/><rect x="9" y="3.5" width="3.2" height="10" fill="#4f74d6" stroke="#2d4aa0" stroke-width=".6"/></svg>
<svg class="b" style="left:904.3px;top:253.0px;" width="18" height="18" viewBox="0 0 18 18"><rect x="3.2" y="3.5" width="10" height="10" fill="#5a83e0" stroke="#2d4aa0" stroke-width=".9"/></svg>
<svg class="b" style="left:930.0px;top:251.5px;" width="18" height="18" viewBox="0 0 18 18"><path d="M1.5 2.5V13L11 13Z" fill="#3f78d0" stroke="#1e4a96" stroke-width=".8"/><path d="M8 11L15.5 1.5L17 3L10 12Z" fill="#e8c07a" stroke="#8a6a30" stroke-width=".7"/><rect x="1" y="13.6" width="16" height="3" fill="#f0b23c" stroke="#9a7214" stroke-width=".6"/></svg>
<div class="b" style="left:953.5px;top:252.5px;width:1.0px;height:19.0px;background:#b4c4b6;"></div>
<svg class="b" style="left:960.0px;top:252.0px;" width="18" height="18" viewBox="0 0 18 18"><path d="M1 4L7 1.5L13 4V10L7 13L1 10Z" fill="#4a78d0" stroke="#24479a" stroke-width=".9"/><path d="M3 5.5L7 4L11 5.5M3.5 8.5L7 10L10.5 8.5" stroke="#bcd0f4" stroke-width="1.1" fill="none"/><circle cx="14.5" cy="3.5" r="2" fill="#e8b04a"/><path d="M14.5 5.5V12 M12.5 8H16.5 M14.5 12L12.8 17 M14.5 12L16.4 17" stroke="#c0482a" stroke-width="1.4" fill="none"/></svg>
<svg class="b" style="left:985.0px;top:252.0px;" width="18" height="18" viewBox="0 0 18 18"><rect x="1" y="6.5" width="13" height="10" fill="#eef2f8" stroke="#4a5f86" stroke-width="1"/><path d="M1 10H14 M1 13H14 M5.5 6.5V16.5" stroke="#7f93b8" stroke-width=".8"/><path d="M4 6L9 1.5L14 6Z" fill="#e8b04a" stroke="#8a6214" stroke-width=".7"/><path d="M12 2H17V8" fill="none" stroke="#5a9a5a" stroke-width="1.6"/></svg>
<svg class="b" style="left:1011.0px;top:252.0px;" width="18" height="18" viewBox="0 0 18 18"><path d="M2 8H15L13.5 16.5H3.5Z" fill="#f0c04a" stroke="#8a6214" stroke-width=".9"/><path d="M2 8L5 5H12L15 8" fill="#f6d87a" stroke="#8a6214" stroke-width=".8"/><rect x="1" y="1" width="3.4" height="3.4" fill="#2f4fb0"/><rect x="13.5" y=".5" width="3.6" height="3.6" fill="#c0382a"/><path d="M7 4L11 2V6Z" fill="#3fa04a"/></svg>
<svg class="b" style="left:1038.5px;top:252.0px;" width="18" height="18" viewBox="0 0 18 18"><path d="M2 3L14 14 M14 3L3 14" stroke="#c8d0c8" stroke-width="2.2"/><circle cx="3" cy="3.5" r="2.2" fill="#d4dcd4"/></svg>
<div class="b" style="left:1060.0px;top:252.5px;width:1.0px;height:19.0px;background:#b4c4b6;"></div>
<div class="b" style="left:1065.5px;top:251.5px;width:19.0px;height:19.0px;border-radius:50%;background:radial-gradient(circle at 40% 30%,#7fb0f4 0%,#2f6fd6 55%,#1f4fb0 100%);box-shadow:0 0 0 1px #2a58b0;"></div>
<span class="t" style="left:1075.0px;top:253.7px;font-size:15.50px;color:#fff;font-weight:700;transform:translateX(-50%);">?</span>
<div class="b" style="left:1090.5px;top:251.5px;width:240.0px;height:22.5px;background:#f1f1ef;border-left:1px solid #dcdcda;"></div>
<span class="t" style="left:1095.5px;top:256.5px;font-size:13.60px;color:#2a2a2a;letter-spacing:0.35px;">行 6,  列 22</span>
<!-- vba_menu -->
<div class="b" style="left:580.0px;top:221.0px;width:1076.0px;height:27.0px;background:linear-gradient(180deg,#eff5ef 0%,#e5efe6 60%,#dbeadd 100%);-webkit-mask-image:linear-gradient(90deg,#000 0%,#000 35%,transparent 70%);mask-image:linear-gradient(90deg,#000 0%,#000 35%,transparent 70%);"></div>
<svg class="b" style="left:585.5px;top:226.0px;" width="2" height="16" viewBox="0 0 2 16"><rect x="0" y="0" width="2" height="2" fill="#9aa89c"/><rect x="0" y="4" width="2" height="2" fill="#9aa89c"/><rect x="0" y="8" width="2" height="2" fill="#9aa89c"/><rect x="0" y="12" width="2" height="2" fill="#9aa89c"/></svg>
<svg class="b" style="left:590.5px;top:224.5px;" width="20" height="19" viewBox="0 0 20 19"><circle cx="9.5" cy="9" r="3.6" fill="#2f9a4a" stroke="#124a20" stroke-width=".8"/><rect x="8" y="1" width="3.5" height="5" fill="#e8c83a" stroke="#5a4a10" stroke-width=".7"/><rect x="1" y="7" width="5" height="4.5" fill="#a02ab0" stroke="#4a0a5a" stroke-width=".7"/><rect x="13.5" y="3" width="5" height="4.5" fill="#7a2ab0" stroke="#3a0a5a" stroke-width=".7"/><rect x="13" y="9.5" width="5.5" height="4.5" fill="#2f8ad0" stroke="#0a3a6a" stroke-width=".7"/><rect x="8.5" y="13" width="4" height="4.5" fill="#e8c83a" stroke="#5a4a10" stroke-width=".7"/></svg>
<span class="t" style="left:618.5px;top:227.8px;font-size:13.70px;color:#1e1e1e;">文件<span style="letter-spacing:-.3px">(<u>F</u>)</span></span>
<span class="t" style="left:675.0px;top:227.8px;font-size:13.70px;color:#1e1e1e;">编辑<span style="letter-spacing:-.3px">(<u>E</u>)</span></span>
<span class="t" style="left:732.0px;top:227.8px;font-size:13.70px;color:#1e1e1e;">视图<span style="letter-spacing:-.3px">(<u>V</u>)</span></span>
<span class="t" style="left:790.5px;top:227.8px;font-size:13.70px;color:#1e1e1e;">插入<span style="letter-spacing:-.3px">(<u>I</u>)</span></span>
<span class="t" style="left:844.0px;top:227.8px;font-size:13.70px;color:#1e1e1e;">格式<span style="letter-spacing:-.3px">(<u>O</u>)</span></span>
<span class="t" style="left:904.5px;top:227.8px;font-size:13.70px;color:#1e1e1e;">调试<span style="letter-spacing:-.3px">(<u>D</u>)</span></span>
<span class="t" style="left:964.5px;top:227.8px;font-size:13.70px;color:#1e1e1e;">运行<span style="letter-spacing:-.3px">(<u>R</u>)</span></span>
<span class="t" style="left:1023.5px;top:227.8px;font-size:13.70px;color:#1e1e1e;">工具<span style="letter-spacing:-.3px">(<u>T</u>)</span></span>
<span class="t" style="left:1080.0px;top:227.8px;font-size:13.70px;color:#1e1e1e;">外接程序<span style="letter-spacing:-.3px">(<u>A</u>)</span></span>
<span class="t" style="left:1166.5px;top:227.8px;font-size:13.70px;color:#1e1e1e;">窗口<span style="letter-spacing:-.3px">(<u>W</u>)</span></span>
<span class="t" style="left:1229.0px;top:227.8px;font-size:13.70px;color:#1e1e1e;">帮助<span style="letter-spacing:-.3px">(<u>H</u>)</span></span>
<div class="b" style="left:1598.5px;top:236.5px;width:6.5px;height:2.6px;background:#111;"></div>
<svg class="b" style="left:1617.0px;top:227.5px;" width="11" height="11" viewBox="0 0 11 11"><path d="M.8 4H7.5V10.2H.8Z M3.5 3.5V1H10.2V7H8" fill="none" stroke="#111" stroke-width="1.5"/><path d="M.8 4.4H7.5 M3.5 1.4H10.2" stroke="#111" stroke-width="1.8"/></svg>
<svg class="b" style="left:1640.0px;top:228.5px;" width="10" height="9.5" viewBox="0 0 10 9.5"><path d="M1 1L9 8.5 M9 1L1 8.5" stroke="#111" stroke-width="2"/></svg>
<!-- vba_project -->
<div class="b" style="left:579.0px;top:276.0px;width:62.0px;height:803.0px;background:#c9e4cd;"></div>
<div class="b" style="left:579.0px;top:276.5px;width:38.0px;height:24.0px;background:#b7cbdf;"></div>
<span class="t" style="left:580.5px;top:279.3px;font-size:12.60px;color:#2b3b4f;">工程 -</span>
<div class="b" style="left:617.5px;top:277.0px;width:22.5px;height:22.0px;background:#eaf1ea;border:1px solid #fff;border-right-color:#8e8e8e;border-bottom-color:#8e8e8e;"></div>
<svg class="b" style="left:622.0px;top:281.0px;" width="15.5" height="14" viewBox="0 0 15.5 14"><path d="M1.2 1.2L14.3 12.8 M14.3 1.2L1.2 12.8" stroke="#0a0a0a" stroke-width="2.4"/></svg>
<div class="b" style="left:581.0px;top:301.5px;width:48.0px;height:28.5px;background:linear-gradient(180deg,#f2f6f2 0%,#e3eee4 60%,#d6e8d8 100%);"></div>
<svg class="b" style="left:588.0px;top:308.5px;" width="16.5" height="14" viewBox="0 0 16.5 14"><rect x=".6" y=".6" width="15.2" height="12.6" fill="#eef0fa" stroke="#5a6aa8" stroke-width="1.2"/><rect x=".6" y=".6" width="15.2" height="3" fill="#6f83c8"/><path d="M3.5 6.5H8 M9.5 6.5H13 M3.5 9.5H8 M9.5 9.5H13" stroke="#e07a8a" stroke-width="1.5"/></svg>
<div class="b" style="left:628.0px;top:302.5px;width:12.5px;height:27.5px;background:linear-gradient(180deg,#c4c6c4 0%,#a2a4a2 55%,#8c8e8c 100%);border-radius:0 3px 3px 0;"></div>
<svg class="b" style="left:630.0px;top:306.5px;" width="9" height="5" viewBox="0 0 9 5"><path d="M0 0L3 2.5L0 5Z M5 0L8 2.5L5 5Z" fill="#111"/></svg>
<div class="b" style="left:630.5px;top:318.5px;width:8.0px;height:1.2px;background:#111;"></div>
<svg class="b" style="left:630.5px;top:321.0px;" width="8" height="4.5" viewBox="0 0 8 4.5"><path d="M0 0H8L4 4.5Z" fill="#0a0a0a"/></svg>
<div class="b" style="left:579.0px;top:330.5px;width:62.0px;height:2.0px;background:#8b988d;"></div>
<div class="b" style="left:579.0px;top:276.0px;width:2.0px;height:803.0px;background:#a9b9ab;"></div>
<div class="b" style="left:589.8px;top:347.0px;width:1.0px;height:134.0px;background:repeating-linear-gradient(180deg,#8fa191 0 1px,transparent 1px 2px);"></div>
<div class="b" style="left:595.0px;top:342.0px;width:6.0px;height:1.0px;background:repeating-linear-gradient(90deg,#8fa191 0 1px,transparent 1px 2px);"></div>
<svg class="b" style="left:585.1px;top:337.1px;" width="9.8" height="9.8" viewBox="0 0 9.8 9.8"><rect x=".5" y=".5" width="8.8" height="8.8" fill="#d4ead7" stroke="#7f917f" stroke-width="1"/><path d="M2.2 4.9H7.6 M4.9 2.2V7.6" stroke="#1a1a1a" stroke-width="1.1"/></svg>
<svg class="b" style="left:600.5px;top:333.0px;" width="18" height="18" viewBox="0 0 18 18"><path d="M2 12L9 15.5L16 12L9 9Z" fill="#8fd8e0" stroke="#1e2a3a" stroke-width="1"/><path d="M3 11.5V4L6.5 5.5V10" fill="#dff" stroke="#1e2a3a" stroke-width="1"/><path d="M8 11V5L11 6.5V11.5" fill="#9fe" stroke="#1e2a3a" stroke-width="1"/><path d="M11 6L14.5 1.8" stroke="#1e2a3a" stroke-width="1.1"/><circle cx="15" cy="1.6" r="1.3" fill="#fff" stroke="#1e2a3a" stroke-width=".8"/><circle cx="11.5" cy="8.5" r="1.2" fill="#e04a3a"/><circle cx="5" cy="8" r="1.1" fill="#3a6ad0"/></svg>
<span class="t" style="left:622.8px;top:336.3px;font-size:12.80px;color:#1a1a1a;font-family:'Liberation Serif',serif;font-weight:700;letter-spacing:0.40px;">Sol</span>
<div class="b" style="left:595.0px;top:360.0px;width:6.0px;height:1.0px;background:repeating-linear-gradient(90deg,#8fa191 0 1px,transparent 1px 2px);"></div>
<svg class="b" style="left:585.1px;top:355.1px;" width="9.8" height="9.8" viewBox="0 0 9.8 9.8"><rect x=".5" y=".5" width="8.8" height="8.8" fill="#d4ead7" stroke="#7f917f" stroke-width="1"/><path d="M2.2 4.9H7.6 M4.9 2.2V7.6" stroke="#1a1a1a" stroke-width="1.1"/></svg>
<svg class="b" style="left:600.5px;top:351.0px;" width="18" height="18" viewBox="0 0 18 18"><path d="M2 12L9 15.5L16 12L9 9Z" fill="#8fd8e0" stroke="#1e2a3a" stroke-width="1"/><path d="M3 11.5V4L6.5 5.5V10" fill="#dff" stroke="#1e2a3a" stroke-width="1"/><path d="M8 11V5L11 6.5V11.5" fill="#9fe" stroke="#1e2a3a" stroke-width="1"/><path d="M11 6L14.5 1.8" stroke="#1e2a3a" stroke-width="1.1"/><circle cx="15" cy="1.6" r="1.3" fill="#fff" stroke="#1e2a3a" stroke-width=".8"/><circle cx="11.5" cy="8.5" r="1.2" fill="#e04a3a"/><circle cx="5" cy="8" r="1.1" fill="#3a6ad0"/></svg>
<span class="t" style="left:622.8px;top:354.3px;font-size:12.80px;color:#1a1a1a;font-family:'Liberation Serif',serif;font-weight:700;letter-spacing:0.40px;">VBA</span>
<div class="b" style="left:595.0px;top:378.0px;width:6.0px;height:1.0px;background:repeating-linear-gradient(90deg,#8fa191 0 1px,transparent 1px 2px);"></div>
<svg class="b" style="left:585.1px;top:373.1px;" width="9.8" height="9.8" viewBox="0 0 9.8 9.8"><rect x=".5" y=".5" width="8.8" height="8.8" fill="#d4ead7" stroke="#7f917f" stroke-width="1"/><path d="M2.2 4.9H7.6" stroke="#1a1a1a" stroke-width="1.1"/></svg>
<svg class="b" style="left:600.5px;top:369.0px;" width="18" height="18" viewBox="0 0 18 18"><path d="M2 12L9 15.5L16 12L9 9Z" fill="#8fd8e0" stroke="#1e2a3a" stroke-width="1"/><path d="M3 11.5V4L6.5 5.5V10" fill="#dff" stroke="#1e2a3a" stroke-width="1"/><path d="M8 11V5L11 6.5V11.5" fill="#9fe" stroke="#1e2a3a" stroke-width="1"/><path d="M11 6L14.5 1.8" stroke="#1e2a3a" stroke-width="1.1"/><circle cx="15" cy="1.6" r="1.3" fill="#fff" stroke="#1e2a3a" stroke-width=".8"/><circle cx="11.5" cy="8.5" r="1.2" fill="#e04a3a"/><circle cx="5" cy="8" r="1.1" fill="#3a6ad0"/></svg>
<span class="t" style="left:622.8px;top:372.3px;font-size:12.80px;color:#1a1a1a;font-family:'Liberation Serif',serif;font-weight:700;letter-spacing:0.40px;">VBA</span>
<div class="b" style="left:595.0px;top:485.5px;width:6.0px;height:1.0px;background:repeating-linear-gradient(90deg,#8fa191 0 1px,transparent 1px 2px);"></div>
<svg class="b" style="left:585.1px;top:480.6px;" width="9.8" height="9.8" viewBox="0 0 9.8 9.8"><rect x=".5" y=".5" width="8.8" height="8.8" fill="#d4ead7" stroke="#7f917f" stroke-width="1"/><path d="M2.2 4.9H7.6" stroke="#1a1a1a" stroke-width="1.1"/></svg>
<svg class="b" style="left:600.5px;top:476.5px;" width="18" height="18" viewBox="0 0 18 18"><path d="M2 12L9 15.5L16 12L9 9Z" fill="#8fd8e0" stroke="#1e2a3a" stroke-width="1"/><path d="M3 11.5V4L6.5 5.5V10" fill="#dff" stroke="#1e2a3a" stroke-width="1"/><path d="M8 11V5L11 6.5V11.5" fill="#9fe" stroke="#1e2a3a" stroke-width="1"/><path d="M11 6L14.5 1.8" stroke="#1e2a3a" stroke-width="1.1"/><circle cx="15" cy="1.6" r="1.3" fill="#fff" stroke="#1e2a3a" stroke-width=".8"/><circle cx="11.5" cy="8.5" r="1.2" fill="#e04a3a"/><circle cx="5" cy="8" r="1.1" fill="#3a6ad0"/></svg>
<span class="t" style="left:622.8px;top:479.8px;font-size:12.80px;color:#1a1a1a;font-family:'Liberation Serif',serif;font-weight:700;letter-spacing:0.40px;">VBA</span>
<div class="b" style="left:615.0px;top:396.0px;width:8.0px;height:1.0px;background:repeating-linear-gradient(90deg,#8fa191 0 1px,transparent 1px 2px);"></div>
<svg class="b" style="left:605.1px;top:391.1px;" width="9.8" height="9.8" viewBox="0 0 9.8 9.8"><rect x=".5" y=".5" width="8.8" height="8.8" fill="#d4ead7" stroke="#7f917f" stroke-width="1"/><path d="M2.2 4.9H7.6" stroke="#1a1a1a" stroke-width="1.1"/></svg>
<svg class="b" style="left:622.5px;top:388.5px;" width="18" height="15" viewBox="0 0 18 15"><path d="M1 3.5C1 1.5 2.5 1 4 1H7.5L9.5 3H15C16.5 3 17 4 17 5V12.5C17 13.5 16.3 14 15.5 14H2.5C1.5 14 1 13.4 1 12.5Z" fill="#f0e08a" stroke="#8a8a6a" stroke-width="1"/><path d="M1.5 6H16.5" stroke="#fff7c0" stroke-width="1.2"/><path d="M13 6.5L17 12V6.5Z" fill="#3a3a2a"/></svg>
<div class="b" style="left:615.0px;top:504.5px;width:8.0px;height:1.0px;background:repeating-linear-gradient(90deg,#8fa191 0 1px,transparent 1px 2px);"></div>
<svg class="b" style="left:605.1px;top:499.6px;" width="9.8" height="9.8" viewBox="0 0 9.8 9.8"><rect x=".5" y=".5" width="8.8" height="8.8" fill="#d4ead7" stroke="#7f917f" stroke-width="1"/><path d="M2.2 4.9H7.6" stroke="#1a1a1a" stroke-width="1.1"/></svg>
<svg class="b" style="left:622.5px;top:497.0px;" width="18" height="15" viewBox="0 0 18 15"><path d="M1 3.5C1 1.5 2.5 1 4 1H7.5L9.5 3H15C16.5 3 17 4 17 5V12.5C17 13.5 16.3 14 15.5 14H2.5C1.5 14 1 13.4 1 12.5Z" fill="#f0e08a" stroke="#8a8a6a" stroke-width="1"/><path d="M1.5 6H16.5" stroke="#fff7c0" stroke-width="1.2"/><path d="M13 6.5L17 12V6.5Z" fill="#3a3a2a"/></svg>
<div class="b" style="left:615.0px;top:558.5px;width:8.0px;height:1.0px;background:repeating-linear-gradient(90deg,#8fa191 0 1px,transparent 1px 2px);"></div>
<svg class="b" style="left:605.1px;top:553.6px;" width="9.8" height="9.8" viewBox="0 0 9.8 9.8"><rect x=".5" y=".5" width="8.8" height="8.8" fill="#d4ead7" stroke="#7f917f" stroke-width="1"/><path d="M2.2 4.9H7.6" stroke="#1a1a1a" stroke-width="1.1"/></svg>
<svg class="b" style="left:622.5px;top:551.0px;" width="18" height="15" viewBox="0 0 18 15"><path d="M1 3.5C1 1.5 2.5 1 4 1H7.5L9.5 3H15C16.5 3 17 4 17 5V12.5C17 13.5 16.3 14 15.5 14H2.5C1.5 14 1 13.4 1 12.5Z" fill="#f0e08a" stroke="#8a8a6a" stroke-width="1"/><path d="M1.5 6H16.5" stroke="#fff7c0" stroke-width="1.2"/><path d="M13 6.5L17 12V6.5Z" fill="#3a3a2a"/></svg>
<div class="b" style="left:609.8px;top:387.0px;width:1.0px;height:4.0px;background:repeating-linear-gradient(180deg,#8fa191 0 1px,transparent 1px 2px);"></div>
<div class="b" style="left:609.8px;top:495.0px;width:1.0px;height:59.0px;background:repeating-linear-gradient(180deg,#8fa191 0 1px,transparent 1px 2px);"></div>
<div class="b" style="left:630.0px;top:404.0px;width:1.0px;height:64.0px;background:repeating-linear-gradient(180deg,#8fa191 0 1px,transparent 1px 2px);"></div>
<div class="b" style="left:630.0px;top:512.0px;width:1.0px;height:28.0px;background:repeating-linear-gradient(180deg,#8fa191 0 1px,transparent 1px 2px);"></div>
<div class="b" style="left:630.0px;top:566.0px;width:1.0px;height:11.0px;background:repeating-linear-gradient(180deg,#8fa191 0 1px,transparent 1px 2px);"></div>
<div class="b" style="left:630.0px;top:414.0px;width:11.0px;height:1.0px;background:repeating-linear-gradient(90deg,#8fa191 0 1px,transparent 1px 2px);"></div>
<div class="b" style="left:630.0px;top:432.0px;width:11.0px;height:1.0px;background:repeating-linear-gradient(90deg,#8fa191 0 1px,transparent 1px 2px);"></div>
<div class="b" style="left:630.0px;top:450.0px;width:11.0px;height:1.0px;background:repeating-linear-gradient(90deg,#8fa191 0 1px,transparent 1px 2px);"></div>
<div class="b" style="left:630.0px;top:468.0px;width:11.0px;height:1.0px;background:repeating-linear-gradient(90deg,#8fa191 0 1px,transparent 1px 2px);"></div>
<div class="b" style="left:630.0px;top:522.0px;width:11.0px;height:1.0px;background:repeating-linear-gradient(90deg,#8fa191 0 1px,transparent 1px 2px);"></div>
<div class="b" style="left:630.0px;top:540.0px;width:11.0px;height:1.0px;background:repeating-linear-gradient(90deg,#8fa191 0 1px,transparent 1px 2px);"></div>
<div class="b" style="left:630.0px;top:577.0px;width:11.0px;height:1.0px;background:repeating-linear-gradient(90deg,#8fa191 0 1px,transparent 1px 2px);"></div>
<div class="b" style="left:640.5px;top:276.0px;width:6.0px;height:803.0px;background:#eaf0ea;"></div>
<!-- vba_code -->
<div class="b" style="left:646.0px;top:276.5px;width:1010.0px;height:1.3px;background:#8d9a8f;"></div>
<div class="b" style="left:646.0px;top:277.8px;width:1010.0px;height:1.2px;background:#f4f8f4;"></div>
<div class="b" style="left:646.0px;top:276.5px;width:2.3px;height:802.5px;background:#8c8c8a;"></div>
<div class="b" style="left:648.3px;top:279.0px;width:1008.0px;height:21.0px;background:#e9efe9;"></div>
<div class="b" style="left:654.5px;top:279.5px;width:491.5px;height:18.8px;background:#cbe6cf;border:1px solid #848c84;border-right-color:#f6f6f6;border-bottom-color:#f6f6f6;box-shadow:inset 1px 1px 0 #8c948c;"></div>
<div class="b" style="left:1126.5px;top:280.8px;width:18.3px;height:16.6px;background:#eef2ee;border:1px solid #fbfbfb;border-right-color:#7e7e7e;border-bottom-color:#7e7e7e;"></div>
<svg class="b" style="left:1131.3px;top:287.3px;" width="8.6" height="4.6" viewBox="0 0 8.6 4.6"><path d="M0 0H8.6L4.3 4.6Z" fill="#050505"/></svg>
<div class="b" style="left:1154.5px;top:279.5px;width:491.5px;height:18.8px;background:#cbe6cf;border:1px solid #848c84;border-right-color:#f6f6f6;border-bottom-color:#f6f6f6;box-shadow:inset 1px 1px 0 #8c948c;"></div>
<div class="b" style="left:1626.5px;top:280.8px;width:18.3px;height:16.6px;background:#eef2ee;border:1px solid #fbfbfb;border-right-color:#7e7e7e;border-bottom-color:#7e7e7e;"></div>
<svg class="b" style="left:1631.3px;top:287.3px;" width="8.6" height="4.6" viewBox="0 0 8.6 4.6"><path d="M0 0H8.6L4.3 4.6Z" fill="#050505"/></svg>
<span class="t" style="left:660.0px;top:281.6px;font-size:13.60px;color:#1c261f;font-family:'Liberation Serif','Noto Serif CJK SC',serif;font-weight:700;letter-spacing:0.50px;">(<span style="letter-spacing:0">通用</span>)</span>
<span class="t" style="left:1158.2px;top:280.8px;font-size:14.30px;color:#0e1a10;font-family:'Liberation Serif',serif;font-weight:700;letter-spacing:0.92px;">helloRose</span>
<div class="b" style="left:648.3px;top:299.7px;width:1006.0px;height:1.3px;background:#fafcfa;"></div>
<div class="b" style="left:648.3px;top:301.0px;width:1006.5px;height:1.6px;background:#8c8f8c;"></div>
<div class="b" style="left:648.3px;top:302.6px;width:1005.0px;height:776.4px;background:#c7e4cb;"></div>
<div class="b" style="left:648.3px;top:302.6px;width:24.0px;height:776.4px;background:#efefed;"></div>
<div class="b" style="left:672.3px;top:302.6px;width:1.2px;height:776.4px;background:#3f5546;"></div>
<div class="b" style="left:1635.0px;top:302.6px;width:18.4px;height:776.4px;background:#efeeec;"></div>
<div class="b" style="left:1653.3px;top:300.5px;width:1.5px;height:778.5px;background:#8f8f8d;"></div>
<div class="b" style="left:1654.8px;top:277.0px;width:2.7px;height:802.0px;background:#eef3ee;"></div>
<div class="b" style="left:1635.0px;top:306.0px;width:18.3px;height:19.5px;background:#f0f0ee;border-top:1px solid #9b9b99;border-bottom:1px solid #b4b4b2;"></div>
<svg class="b" style="left:1639.7px;top:313.5px;" width="9.6" height="5.3" viewBox="0 0 9.6 5.3"><path d="M0 5.3H9.6L4.8 0Z" fill="#050505"/></svg>
<div class="b" style="left:1635.0px;top:1073.0px;width:18.3px;height:2.0px;background:#d8d8d6;"></div>
<span class="t" style="left:681.0px;top:308.1px;font-size:20.00px;color:#14229c;font-family:'Liberation Mono',monospace;letter-spacing:-0.75px;">Sub </span>
<span class="t" style="left:726.0px;top:308.1px;font-size:20.00px;color:#0a0a0a;font-family:'Liberation Mono',monospace;letter-spacing:-0.75px;">helloRose()</span>
<span class="t" style="left:681.0px;top:382.1px;font-size:20.00px;color:#0a0a0a;font-family:'Liberation Mono',monospace;letter-spacing:-0.75px;">ActiveWorkbook.Sheets(1).Range(&quot;A1&quot;) = &quot;Rose&quot;</span>
<span class="t" style="left:681.0px;top:406.7px;font-size:20.00px;color:#0a0a0a;font-family:'Liberation Mono',monospace;letter-spacing:-0.75px;">ActiveWorkbook.Save</span>
<span class="t" style="left:681.0px;top:431.4px;font-size:20.00px;color:#0a0a0a;font-family:'Liberation Mono',monospace;letter-spacing:-0.75px;">ActiveWorkbook.Close</span>
<span class="t" style="left:681.0px;top:530.1px;font-size:20.00px;color:#14229c;font-family:'Liberation Mono',monospace;letter-spacing:-0.75px;">End Sub</span>
<span class="t" style="left:681.0px;top:357.4px;font-size:20.00px;color:#0a0a0a;font-family:'Liberation Mono',monospace;letter-spacing:-0.75px;">Workbooks.Open &quot;C:\Users\RoseLiu\Desktop\Rose\</span>
<span class="t" style="left:1199.5px;top:356.0px;font-size:20.40px;color:#1a1a1a;font-family:'Liberation Serif','Noto Serif CJK SC',serif;letter-spacing:2.1px;">送玫瑰专用工作簿</span>
<span class="t" style="left:1378.5px;top:357.4px;font-size:20.00px;color:#0a0a0a;font-family:'Liberation Mono',monospace;letter-spacing:-0.75px;">.xlsx&quot;</span>
<div class="b" style="left:850.0px;top:452.3px;width:327.3px;height:20.4px;background:#fefef2;border:1px solid #a9aaa4;border-top-color:#d9dcd2;border-left-color:#d9dcd2;box-shadow:1px 1px 1.5px rgba(0,0,0,.22);overflow:hidden;"></div>
<span class="t" style="left:853.7px;top:457.0px;font-size:12.60px;color:#1a1a1a;font-family:'Liberation Serif',serif;letter-spacing:0.75px;">Close(<b>[<i>SaveChanges</i>]</b>,  [<i>Filename</i>],  [<i>RouteWorkbook</i>])</span>
<div class="b" style="left:867.3px;top:380.0px;width:1.4px;height:22.0px;background:rgba(250,250,250,.9);"></div>
<div class="b" style="left:864.8px;top:379.5px;width:6.4px;height:1.2px;background:rgba(250,250,250,.9);"></div>
<div class="b" style="left:864.8px;top:401.5px;width:6.4px;height:1.2px;background:rgba(250,250,250,.9);"></div>
<div class="b" style="left:578.5px;top:1077.5px;width:1079.0px;height:1.6px;background:#6f8574;"></div>
<!-- watermark -->
<svg class="b" style="left:0;top:0" width="1920" height="90" viewBox="0 0 1920 90"><g fill="none" stroke="#fff" stroke-width="2.9" stroke-linecap="round" stroke-linejoin="round" opacity=".37"><path d="M1690.6 28.8C1695.5 28.8 1697.8 31 1697.8 36V56C1697.8 63 1701.5 67 1708 67H1750C1756.5 67 1760 63.5 1760 57V33.5C1760 27.5 1756.5 24 1751.5 24L1748 20.8L1744.5 24H1721L1717.5 20.8L1714 24H1713C1709 24 1707 26.5 1707 30.5V44M1722 28.8H1745M1724 33.8H1743M1721 39H1746M1733.3 28.8V39M1709.4 50H1714.4M1709.4 54.4H1714.4M1750.6 50H1757.5M1750.6 54.4H1757.5"/></g></svg>
<span class="t" style="left:1766px;top:22px;font-size:44px;color:rgba(255,255,255,.37);width:134px;overflow:hidden;font-family:'Liberation Sans','Noto Sans CJK SC',sans-serif;">虎课网</span>
<!-- sidewidget -->
<div class="b" style="left:1904.0px;top:507.0px;width:16.0px;height:67.0px;background:#30323b;border-radius:2px 0 0 2px;"></div>
<svg class="b" style="left:1907.5px;top:536.5px;" width="8" height="7" viewBox="0 0 8 7"><path d="M3 1H8 M3 3.5H8 M3 6H8 M0 3.2L1.8 1.8V4.6Z" stroke="#d8d8d8" stroke-width="1" fill="#d8d8d8"/></svg>
</body></html>
